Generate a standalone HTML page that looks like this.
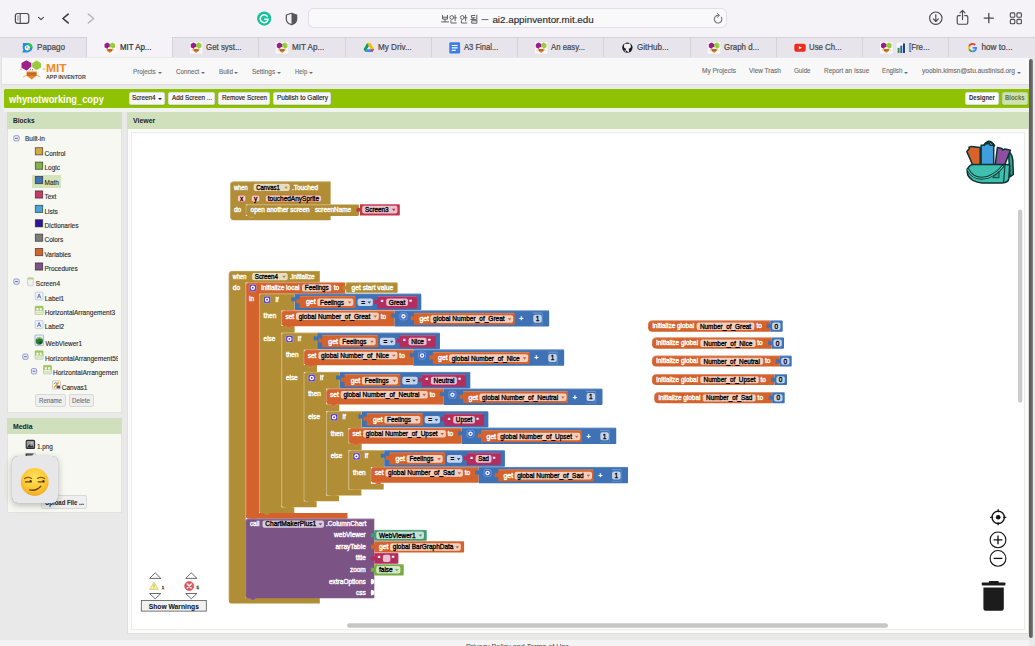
<!DOCTYPE html>
<html><head><meta charset="utf-8"><title>MIT App Inventor</title>
<style>
*{box-sizing:border-box;margin:0;padding:0}
html,body{width:1035px;height:646px;overflow:hidden;background:#e9e9e9;font-family:"Liberation Sans",sans-serif;}
#root{position:relative;width:1035px;height:646px;overflow:hidden}
.a{position:absolute}
.t{position:absolute;white-space:nowrap;line-height:1;font-family:"Liberation Sans",sans-serif}
svg{position:absolute;left:0;top:0;overflow:visible}
svg text{font-family:"Liberation Sans",sans-serif}
</style></head><body><div id="root">
<div class="a toolbar" style="left:0.00px;top:0.00px;width:1035.00px;height:37.30px;background:#f5f3f7;"></div>
<div class="a " style="left:308.30px;top:8.40px;width:418.70px;height:19.90px;background:#f9f8fb;border:1px solid #e1dee5;border-radius:5.5px;"></div>
<div class="a tabbar" style="left:0.00px;top:37.30px;width:1035.00px;height:20.50px;background:#e7e5eb;border-top:1px solid #d4d1d9;border-bottom:1px solid #cfccd4;"></div>
<div class="a " style="left:86.25px;top:37.30px;width:86.25px;height:20.50px;background:#f5f3f7;border-left:1px solid #d4d1d9;border-right:1px solid #d4d1d9;"></div>
<div class="a " style="left:172.00px;top:38.30px;width:1.00px;height:18.70px;background:#d5d2da;"></div>
<div class="a " style="left:258.25px;top:38.30px;width:1.00px;height:18.70px;background:#d5d2da;"></div>
<div class="a " style="left:344.50px;top:38.30px;width:1.00px;height:18.70px;background:#d5d2da;"></div>
<div class="a " style="left:430.75px;top:38.30px;width:1.00px;height:18.70px;background:#d5d2da;"></div>
<div class="a " style="left:517.00px;top:38.30px;width:1.00px;height:18.70px;background:#d5d2da;"></div>
<div class="a " style="left:603.25px;top:38.30px;width:1.00px;height:18.70px;background:#d5d2da;"></div>
<div class="a " style="left:689.50px;top:38.30px;width:1.00px;height:18.70px;background:#d5d2da;"></div>
<div class="a " style="left:775.75px;top:38.30px;width:1.00px;height:18.70px;background:#d5d2da;"></div>
<div class="a " style="left:862.00px;top:38.30px;width:1.00px;height:18.70px;background:#d5d2da;"></div>
<div class="a " style="left:948.25px;top:38.30px;width:1.00px;height:18.70px;background:#d5d2da;"></div>
<span class="t" style="left:37.00px;top:43.75px;font-size:8.2px;color:#444447;transform:scaleX(0.9904);transform-origin:0 0;-webkit-text-stroke:0.2px currentColor;">Papago</span>
<span class="t" style="left:119.50px;top:43.75px;font-size:8.2px;color:#2f2f31;transform:scaleX(0.9645);transform-origin:0 0;-webkit-text-stroke:0.2px currentColor;">MIT Ap...</span>
<span class="t" style="left:205.50px;top:43.75px;font-size:8.2px;color:#444447;transform:scaleX(0.9619);transform-origin:0 0;-webkit-text-stroke:0.2px currentColor;">Get syst...</span>
<span class="t" style="left:292.00px;top:43.75px;font-size:8.2px;color:#444447;transform:scaleX(0.9859);transform-origin:0 0;-webkit-text-stroke:0.2px currentColor;">MIT Ap...</span>
<span class="t" style="left:378.20px;top:43.75px;font-size:8.2px;color:#444447;transform:scaleX(0.9938);transform-origin:0 0;-webkit-text-stroke:0.2px currentColor;">My Driv...</span>
<span class="t" style="left:464.40px;top:43.75px;font-size:8.2px;color:#444447;transform:scaleX(0.9318);transform-origin:0 0;-webkit-text-stroke:0.2px currentColor;">A3 Final...</span>
<span class="t" style="left:551.00px;top:43.75px;font-size:8.2px;color:#444447;transform:scaleX(0.9483);transform-origin:0 0;-webkit-text-stroke:0.2px currentColor;">An easy...</span>
<span class="t" style="left:637.00px;top:43.75px;font-size:8.2px;color:#444447;transform:scaleX(0.9828);transform-origin:0 0;-webkit-text-stroke:0.2px currentColor;">GitHub...</span>
<span class="t" style="left:723.60px;top:43.75px;font-size:8.2px;color:#444447;transform:scaleX(0.9653);transform-origin:0 0;-webkit-text-stroke:0.2px currentColor;">Graph d...</span>
<span class="t" style="left:809.40px;top:43.75px;font-size:8.2px;color:#444447;transform:scaleX(0.9538);transform-origin:0 0;-webkit-text-stroke:0.2px currentColor;">Use Ch...</span>
<span class="t" style="left:909.40px;top:43.75px;font-size:8.2px;color:#444447;transform:scaleX(0.9620);transform-origin:0 0;-webkit-text-stroke:0.2px currentColor;">[Fre...</span>
<span class="t" style="left:981.50px;top:43.75px;font-size:8.2px;color:#444447;-webkit-text-stroke:0.2px currentColor;">how to...</span>
<span class="t" style="left:492.40px;top:14.54px;font-size:9.8px;color:#2b2b2d;-webkit-text-stroke:0.15px currentColor;">ai2.appinventor.mit.edu</span>
<svg width="1035" height="60" viewBox="0 0 1035 60"><rect x="15.4" y="13.5" width="13.4" height="9.8" rx="2.3" fill="none" stroke="#4a4a4d" stroke-width="1.2"/><path d="M20.2,13.5V23.3" stroke="#4a4a4d" stroke-width="1.1"/><path d="M17,16.2h1.8M17,18h1.8M17,19.8h1.8" stroke="#4a4a4d" stroke-width="0.6"/><path d="M38.6,17.3L41,19.7L43.4,17.3" fill="none" stroke="#4a4a4d" stroke-width="1.2" stroke-linecap="round" stroke-linejoin="round"/><path d="M68.2,14.1L62.9,18.5L68.2,22.9" fill="none" stroke="#3a3a3c" stroke-width="1.6" stroke-linecap="round" stroke-linejoin="round"/><path d="M88.4,14.1L93.7,18.5L88.4,22.9" fill="none" stroke="#b9b6bd" stroke-width="1.5" stroke-linecap="round" stroke-linejoin="round"/><circle cx="264.2" cy="18.6" r="7.1" fill="#15c39a"/><path d="M267.2,16.3A3.9,3.9 0 1 0 268,19.3H264.6" fill="none" stroke="#fff" stroke-width="1.5" stroke-linecap="round"/><path d="M291.5,13.2L296.7,15V19.2C296.7,22 294.2,23.9 291.5,24.7C288.8,23.9 286.3,22 286.3,19.2V15Z" fill="#f4f1f6" stroke="#56565a" stroke-width="1.2" stroke-linejoin="round"/><path d="M291.5,13.2L296.7,15V19.2C296.7,22 294.2,23.9 291.5,24.7Z" fill="#56565a"/><g transform="translate(441.3,15.2)" fill="none" stroke="#5a5a5e" stroke-width="0.95" stroke-linecap="round" stroke-linejoin="round"><path d="M1.2,0.2V3.9H6.2V0.2M1.2,2H6.2M3.7,4.2V6.4M0.2,6.7H7.3"/></g><g transform="translate(449.5,15.2)" fill="none" stroke="#5a5a5e" stroke-width="0.95" stroke-linecap="round" stroke-linejoin="round"><circle cx="2.3" cy="2.3" r="1.9"/><path d="M5.6,0V5.6M5.6,2.6H7M1.4,5.4V7.8H6.8"/></g><g transform="translate(460,15.2)" fill="none" stroke="#5a5a5e" stroke-width="0.95" stroke-linecap="round" stroke-linejoin="round"><circle cx="2.3" cy="2.3" r="1.9"/><path d="M5.6,0V5.6M5.6,2.6H7M1.4,5.4V7.8H6.8"/></g><g transform="translate(470.6,15.2)" fill="none" stroke="#5a5a5e" stroke-width="0.95" stroke-linecap="round" stroke-linejoin="round"><path d="M4.2,0.3H0.8V2.6H4.4M2.4,2.8V4M0.2,4.3H4.9M6.2,0V5.1"/><rect x="1.5" y="5.6" width="4.8" height="2.4"/></g><path d="M481.6,19.6H488.4" stroke="#5a5a5e" stroke-width="0.9"/><path d="M721.3,17.2A3.8,3.8 0 1 1 718.4,15.4" fill="none" stroke="#77757b" stroke-width="1.1" stroke-linecap="round"/><path d="M717.2,13.4L719.6,15.4L717.4,17.4" fill="none" stroke="#77757b" stroke-width="1" stroke-linecap="round" stroke-linejoin="round"/><circle cx="935.8" cy="18.2" r="6.2" fill="none" stroke="#4a4a4d" stroke-width="1.15"/><path d="M935.8,14.6V21.4M933.2,18.9L935.8,21.5L938.4,18.9" fill="none" stroke="#4a4a4d" stroke-width="1.15" stroke-linecap="round" stroke-linejoin="round"/><path d="M960.3,15.6H958.6Q957.2,15.6 957.2,17V22.8Q957.2,24.2 958.6,24.2H966.4Q967.8,24.2 967.8,22.8V17Q967.8,15.6 966.4,15.6H964.7" fill="none" stroke="#4a4a4d" stroke-width="1.15" stroke-linecap="round"/><path d="M962.5,10.4V19.6M960,12.8L962.5,10.3L965,12.8" fill="none" stroke="#4a4a4d" stroke-width="1.15" stroke-linecap="round" stroke-linejoin="round"/><path d="M984.2,18.1H993.4M988.8,13.5V22.7" stroke="#4a4a4d" stroke-width="1.3" stroke-linecap="round"/><rect x="1010.3" y="12.9" width="4.5" height="4.3" rx="1" fill="none" stroke="#4a4a4d" stroke-width="1.1"/><rect x="1010.3" y="19.4" width="4.5" height="4.3" rx="1" fill="none" stroke="#4a4a4d" stroke-width="1.1"/><rect x="1016.9" y="12.9" width="4.5" height="4.3" rx="1" fill="none" stroke="#4a4a4d" stroke-width="1.1"/><rect x="1016.9" y="19.4" width="4.5" height="4.3" rx="1" fill="none" stroke="#4a4a4d" stroke-width="1.1"/><g transform="translate(22.3,42.8)"><path d="M0.6,0.6Q0.2,0.2 1,0.2H5.4C8.6,0.2 10.2,2.4 10.2,4.8C10.2,7.8 7.6,9.6 4.6,9.6H0.2Q-0.2,9.6 0.1,9.1L1.1,7.2Q0.3,5.8 0.4,4.2Z" fill="#1b8fe0"/><path d="M4.6,0.2C8.4,-0.2 10.4,2.4 10.2,5L6.4,4.6Z" fill="#21c75a"/><circle cx="5" cy="5" r="2.6" fill="#f4fbff"/><path d="M5.2,5L7.8,5.6L5.6,7Z" fill="#f2c230"/><circle cx="4.6" cy="4.3" r="0.6" fill="#1c2a55"/></g><g transform="translate(104,42.6) scale(1.0)"><rect x="-0.5" y="-0.5" width="12.5" height="11.5" fill="#fbfafc" opacity="0.9"/><path d="M3.2,0L5.9,1.5V4.6L3.2,6.1L0.5,4.6V1.5Z" fill="#9c1b8c"/><path d="M8.4,0L11.1,1.5V4.6L8.4,6.1L5.7,4.6V1.5Z" fill="#9acb3c"/><path d="M3.3,6.3H8.3V8.4L5.8,10.4L3.3,8.4Z" fill="#e8862a"/><path d="M3.3,7.1H8.3V7.9H3.3Z" fill="#7a3d12"/><path d="M4.2,4.6H7.4V6.3H4.2Z" fill="#f4f0ec"/><path d="M1.4,7.6L3.3,6.9M10.2,7.6L8.3,6.9" stroke="#e8862a" stroke-width="0.6"/></g><g transform="translate(190.3,42.6) scale(1.0)"><rect x="-0.5" y="-0.5" width="12.5" height="11.5" fill="#fbfafc" opacity="0.9"/><path d="M3.2,0L5.9,1.5V4.6L3.2,6.1L0.5,4.6V1.5Z" fill="#9c1b8c"/><path d="M8.4,0L11.1,1.5V4.6L8.4,6.1L5.7,4.6V1.5Z" fill="#9acb3c"/><path d="M3.3,6.3H8.3V8.4L5.8,10.4L3.3,8.4Z" fill="#e8862a"/><path d="M3.3,7.1H8.3V7.9H3.3Z" fill="#7a3d12"/><path d="M4.2,4.6H7.4V6.3H4.2Z" fill="#f4f0ec"/><path d="M1.4,7.6L3.3,6.9M10.2,7.6L8.3,6.9" stroke="#e8862a" stroke-width="0.6"/></g><g transform="translate(276.3,42.6) scale(1.0)"><rect x="-0.5" y="-0.5" width="12.5" height="11.5" fill="#fbfafc" opacity="0.9"/><path d="M3.2,0L5.9,1.5V4.6L3.2,6.1L0.5,4.6V1.5Z" fill="#9c1b8c"/><path d="M8.4,0L11.1,1.5V4.6L8.4,6.1L5.7,4.6V1.5Z" fill="#9acb3c"/><path d="M3.3,6.3H8.3V8.4L5.8,10.4L3.3,8.4Z" fill="#e8862a"/><path d="M3.3,7.1H8.3V7.9H3.3Z" fill="#7a3d12"/><path d="M4.2,4.6H7.4V6.3H4.2Z" fill="#f4f0ec"/><path d="M1.4,7.6L3.3,6.9M10.2,7.6L8.3,6.9" stroke="#e8862a" stroke-width="0.6"/></g><g transform="translate(535.3,42.6) scale(1.0)"><rect x="-0.5" y="-0.5" width="12.5" height="11.5" fill="#fbfafc" opacity="0.9"/><path d="M3.2,0L5.9,1.5V4.6L3.2,6.1L0.5,4.6V1.5Z" fill="#9c1b8c"/><path d="M8.4,0L11.1,1.5V4.6L8.4,6.1L5.7,4.6V1.5Z" fill="#9acb3c"/><path d="M3.3,6.3H8.3V8.4L5.8,10.4L3.3,8.4Z" fill="#e8862a"/><path d="M3.3,7.1H8.3V7.9H3.3Z" fill="#7a3d12"/><path d="M4.2,4.6H7.4V6.3H4.2Z" fill="#f4f0ec"/><path d="M1.4,7.6L3.3,6.9M10.2,7.6L8.3,6.9" stroke="#e8862a" stroke-width="0.6"/></g><g transform="translate(708.3,42.6) scale(1.0)"><rect x="-0.5" y="-0.5" width="12.5" height="11.5" fill="#fbfafc" opacity="0.9"/><path d="M3.2,0L5.9,1.5V4.6L3.2,6.1L0.5,4.6V1.5Z" fill="#9c1b8c"/><path d="M8.4,0L11.1,1.5V4.6L8.4,6.1L5.7,4.6V1.5Z" fill="#9acb3c"/><path d="M3.3,6.3H8.3V8.4L5.8,10.4L3.3,8.4Z" fill="#e8862a"/><path d="M3.3,7.1H8.3V7.9H3.3Z" fill="#7a3d12"/><path d="M4.2,4.6H7.4V6.3H4.2Z" fill="#f4f0ec"/><path d="M1.4,7.6L3.3,6.9M10.2,7.6L8.3,6.9" stroke="#e8862a" stroke-width="0.6"/></g><g transform="translate(880.5,42.6) scale(1.0)"><rect x="-0.5" y="-0.5" width="12.5" height="11.5" fill="#fbfafc" opacity="0.9"/><path d="M3.2,0L5.9,1.5V4.6L3.2,6.1L0.5,4.6V1.5Z" fill="#9c1b8c"/><path d="M8.4,0L11.1,1.5V4.6L8.4,6.1L5.7,4.6V1.5Z" fill="#9acb3c"/><path d="M3.3,6.3H8.3V8.4L5.8,10.4L3.3,8.4Z" fill="#e8862a"/><path d="M3.3,7.1H8.3V7.9H3.3Z" fill="#7a3d12"/><path d="M4.2,4.6H7.4V6.3H4.2Z" fill="#f4f0ec"/><path d="M1.4,7.6L3.3,6.9M10.2,7.6L8.3,6.9" stroke="#e8862a" stroke-width="0.6"/></g><g transform="translate(363.6,43)"><path d="M3.6,0H6.9L10.5,6.2H7.2Z" fill="#fbbc04"/><path d="M3.6,0L0,6.2L1.7,9.1L5.25,2.9Z" fill="#0f9d58"/><path d="M1.7,9.1H8.8L10.5,6.2H3.4Z" fill="#4285f4"/><path d="M7.2,6.2H10.5L8.8,9.1Z" fill="#ea4335"/></g><g transform="translate(449.3,42.2)"><rect x="0" y="0" width="10.8" height="11.4" rx="1.4" fill="#3b7de9"/><path d="M2.4,3.3H8.4M2.4,5.7H8.4M2.4,8.1H6.4" stroke="#fff" stroke-width="1.15"/></g><g transform="translate(627.4,47.6)"><circle r="5.2" fill="#1b1b1d"/><path d="M-1.6,5V2.9C-3.4,3.3 -3.8,2 -4.3,1.6M1.6,5V2.6C1.6,1.8 1.4,1.5 1.1,1.2C2.8,1 3.5,0.1 3.5,-1.3C3.5,-2 3.3,-2.5 2.9,-3C3,-3.4 3,-3.9 2.8,-4.4C2.2,-4.4 1.6,-4 1.2,-3.7C0.4,-3.9 -0.4,-3.9 -1.2,-3.7C-1.6,-4 -2.2,-4.4 -2.8,-4.4C-3,-3.9 -3,-3.4 -2.9,-3C-3.3,-2.5 -3.5,-2 -3.5,-1.3C-3.5,0.1 -2.8,1 -1.1,1.2C-1.4,1.5 -1.6,1.8 -1.6,2.6" fill="#f3f0f5" stroke="none"/></g><g transform="translate(794.3,43.8)"><rect width="11.4" height="8" rx="2" fill="#f0281e"/><path d="M4.5,2.2L7.6,4L4.5,5.8Z" fill="#fff"/></g><g transform="translate(896.8,42.8)"><rect width="9" height="10.2" fill="#f8f8f8"/><rect x="0.8" y="5" width="2" height="5.2" fill="#3a8f3a"/><rect x="3.5" y="2.8" width="2" height="7.4" fill="#2a59b8"/><rect x="6.2" y="0.6" width="2" height="9.6" fill="#1c3f94"/></g><g transform="translate(972.5,47.7)"><path d="M4.5,-0.8H0.1V1H2.6A2.8,2.8 0 0 1 0,2.8V4.6A4.6,4.6 0 0 0 4.5,-0.8Z" fill="#4285f4"/><path d="M0,4.6V2.8A2.8,2.8 0 0 1 -2.6,1L-4.1,2.1A4.6,4.6 0 0 0 0,4.6Z" fill="#34a853"/><path d="M-2.6,1A2.8,2.8 0 0 1 -2.6,-1L-4.1,-2.1A4.6,4.6 0 0 0 -4.1,2.1Z" fill="#fbbc05"/><path d="M-2.6,-1A2.8,2.8 0 0 1 2,-2L3.3,-3.3A4.6,4.6 0 0 0 -4.1,-2.1Z" fill="#ea4335"/></g></svg>
<div class="a " style="left:0.00px;top:57.30px;width:1035.00px;height:588.70px;background:#e9e9e9;"></div>
<div class="a " style="left:1.00px;top:57.80px;width:1029.00px;height:27.10px;background:#f8f8f8;border-bottom:1px solid #dedede;border-left:1px solid #e2e2e2;"></div>
<span class="t" style="left:133.30px;top:68.71px;font-size:6.9px;color:#6e6e6e;transform:scaleX(0.9107);transform-origin:0 0;-webkit-text-stroke:0.12px currentColor;">Projects</span>
<div class="a" style="left:158.00px;top:72.00px;border-left:2.1px solid transparent;border-right:2.1px solid transparent;border-top:2.4px solid #6e6e6e"></div>
<span class="t" style="left:175.80px;top:68.71px;font-size:6.9px;color:#6e6e6e;transform:scaleX(0.9105);transform-origin:0 0;-webkit-text-stroke:0.12px currentColor;">Connect</span>
<div class="a" style="left:201.20px;top:72.00px;border-left:2.1px solid transparent;border-right:2.1px solid transparent;border-top:2.4px solid #6e6e6e"></div>
<span class="t" style="left:218.50px;top:68.71px;font-size:6.9px;color:#6e6e6e;transform:scaleX(0.9059);transform-origin:0 0;-webkit-text-stroke:0.12px currentColor;">Build</span>
<div class="a" style="left:234.40px;top:72.00px;border-left:2.1px solid transparent;border-right:2.1px solid transparent;border-top:2.4px solid #6e6e6e"></div>
<span class="t" style="left:252.00px;top:68.71px;font-size:6.9px;color:#6e6e6e;transform:scaleX(0.9265);transform-origin:0 0;-webkit-text-stroke:0.12px currentColor;">Settings</span>
<div class="a" style="left:277.10px;top:72.00px;border-left:2.1px solid transparent;border-right:2.1px solid transparent;border-top:2.4px solid #6e6e6e"></div>
<span class="t" style="left:294.60px;top:68.71px;font-size:6.9px;color:#6e6e6e;transform:scaleX(0.8597);transform-origin:0 0;-webkit-text-stroke:0.12px currentColor;">Help</span>
<div class="a" style="left:308.80px;top:72.00px;border-left:2.1px solid transparent;border-right:2.1px solid transparent;border-top:2.4px solid #6e6e6e"></div>
<span class="t" style="left:701.70px;top:68.21px;font-size:6.9px;color:#6e6e6e;transform:scaleX(0.9434);transform-origin:0 0;-webkit-text-stroke:0.12px currentColor;">My Projects</span>
<span class="t" style="left:748.70px;top:68.21px;font-size:6.9px;color:#6e6e6e;transform:scaleX(0.9410);transform-origin:0 0;-webkit-text-stroke:0.12px currentColor;">View Trash</span>
<span class="t" style="left:793.70px;top:68.21px;font-size:6.9px;color:#6e6e6e;transform:scaleX(0.9015);transform-origin:0 0;-webkit-text-stroke:0.12px currentColor;">Guide</span>
<span class="t" style="left:823.70px;top:68.21px;font-size:6.9px;color:#6e6e6e;transform:scaleX(0.9300);transform-origin:0 0;-webkit-text-stroke:0.12px currentColor;">Report an Issue</span>
<span class="t" style="left:881.70px;top:68.21px;font-size:6.9px;color:#6e6e6e;transform:scaleX(0.9014);transform-origin:0 0;-webkit-text-stroke:0.12px currentColor;">English</span>
<div class="a" style="left:904.10px;top:71.50px;border-left:2.1px solid transparent;border-right:2.1px solid transparent;border-top:2.4px solid #6e6e6e"></div>
<span class="t" style="left:921.70px;top:68.21px;font-size:6.9px;color:#6e6e6e;transform:scaleX(0.9547);transform-origin:0 0;-webkit-text-stroke:0.12px currentColor;">yoobin.kimsn@stu.austinisd.org</span>
<div class="a" style="left:1016.80px;top:71.50px;border-left:2.1px solid transparent;border-right:2.1px solid transparent;border-top:2.4px solid #6e6e6e"></div>
<span class="t" style="left:45.70px;top:62.83px;font-size:10.8px;color:#f08a24;font-weight:bold;transform:scaleX(1.1025);transform-origin:0 0;">MIT</span>
<span class="t" style="left:45.50px;top:74.06px;font-size:6.2px;color:#4a4a4a;font-weight:bold;transform:scaleX(0.8621);transform-origin:0 0;">APP INVENTOR</span>
<svg width="120" height="90" viewBox="0 0 120 90"><g transform="translate(20,60.2)"><path d="M6.4,0.1L11.3,2.9V7.6L6.4,10.3L1.5,7.6V2.9Z" fill="#a01f8a"/><path d="M16.6,0.4L21.1,3V7.3L16.6,9.8L12.2,7.3V3Z" fill="#9acb3f"/><path d="M0,9.2L2.4,8.6M23,8.6L25.4,9.2M3.2,16.8L6.8,15M16.6,15L20.2,16.8" stroke="#f09a3a" stroke-width="0.8"/><circle cx="11.4" cy="9.9" r="2.9" fill="#fbf7f3"/><circle cx="10.3" cy="9.5" r="0.5" fill="#3a2a2a"/><circle cx="12.6" cy="9.5" r="0.5" fill="#3a2a2a"/><path d="M6.6,11.4H16.7V15.5L11.6,19.3L6.6,15.5Z" fill="#f0892a"/><path d="M6.9,12.5H16.4V13.5H6.9ZM6.9,14.3H16.4V15.2H6.9Z" fill="#a9561c"/></g></svg>
<div class="a greenbar" style="left:4.40px;top:89.20px;width:1026.20px;height:18.70px;background:#8fc202;border-radius:1.5px;"></div>
<span class="t" style="left:8.80px;top:93.83px;font-size:11.2px;color:#fff;font-weight:bold;transform:scaleX(0.8288);transform-origin:0 0;">whynotworking_copy</span>
<div class="a " style="left:128.80px;top:92.00px;width:36.40px;height:12.80px;background:#f7f7f7;border:1px solid #dcdcdc;border-radius:2px;box-shadow:0 0.5px 0.5px rgba(0,0,0,.12);"></div>
<span class="t" style="left:132.25px;top:95.16px;font-size:6.6px;color:#222;transform:scaleX(0.9559);transform-origin:0 0;-webkit-text-stroke:0.15px currentColor;">Screen4</span>
<div class="a" style="left:157.75px;top:97.60px;border-left:2px solid transparent;border-right:2px solid transparent;border-top:2.3px solid #222"></div>
<div class="a " style="left:168.20px;top:92.00px;width:46.80px;height:12.80px;background:#f7f7f7;border:1px solid #dcdcdc;border-radius:2px;box-shadow:0 0.5px 0.5px rgba(0,0,0,.12);"></div>
<span class="t" style="left:171.60px;top:95.16px;font-size:6.6px;color:#222;transform:scaleX(0.9564);transform-origin:0 0;-webkit-text-stroke:0.15px currentColor;">Add Screen ...</span>
<div class="a " style="left:218.00px;top:92.00px;width:52.00px;height:12.80px;background:#f7f7f7;border:1px solid #dcdcdc;border-radius:2px;box-shadow:0 0.5px 0.5px rgba(0,0,0,.12);"></div>
<span class="t" style="left:221.50px;top:95.16px;font-size:6.6px;color:#222;transform:scaleX(0.9509);transform-origin:0 0;-webkit-text-stroke:0.15px currentColor;">Remove Screen</span>
<div class="a " style="left:273.30px;top:92.00px;width:57.70px;height:12.80px;background:#f7f7f7;border:1px solid #dcdcdc;border-radius:2px;box-shadow:0 0.5px 0.5px rgba(0,0,0,.12);"></div>
<span class="t" style="left:276.65px;top:95.16px;font-size:6.6px;color:#222;transform:scaleX(0.9860);transform-origin:0 0;-webkit-text-stroke:0.15px currentColor;">Publish to Gallery</span>
<div class="a " style="left:965.40px;top:92.00px;width:33.40px;height:12.80px;background:#fbfbfb;border:1px solid #dcdcdc;border-radius:2px;box-shadow:0 0.5px 0.5px rgba(0,0,0,.12);"></div>
<span class="t" style="left:969.20px;top:95.16px;font-size:6.6px;color:#2e2e2e;font-weight:bold;transform:scaleX(0.9135);transform-origin:0 0;">Designer</span>
<div class="a " style="left:1001.50px;top:92.00px;width:26.50px;height:12.80px;background:#cfe1b0;border:1px solid #bfd49a;border-radius:2px;box-shadow:0 0.5px 0.5px rgba(0,0,0,.12);"></div>
<span class="t" style="left:1004.95px;top:95.16px;font-size:6.6px;color:#5d7338;font-weight:bold;transform:scaleX(0.9056);transform-origin:0 0;">Blocks</span>
<div class="a " style="left:4.40px;top:107.90px;width:1024.60px;height:4.10px;background:#f1f3ed;"></div>
<div class="a " style="left:1028.80px;top:58.80px;width:4.60px;height:579.60px;background:linear-gradient(90deg,#5a5a5a 0%,#666 60%,#8a8a8a 100%);border-radius:2px;"></div>
<div class="a " style="left:7.00px;top:112.00px;width:115.00px;height:301.40px;background:#f7f8f2;border:1px solid #e1e3dc;"></div>
<div class="a " style="left:7.00px;top:112.00px;width:115.00px;height:16.80px;background:#d1e0bc;"></div>
<span class="t" style="left:12.50px;top:117.05px;font-size:7px;color:#222;font-weight:bold;transform:scaleX(0.9409);transform-origin:0 0;">Blocks</span>
<div class="a " style="left:7.00px;top:418.00px;width:115.00px;height:94.80px;background:#f7f8f2;border:1px solid #e1e3dc;"></div>
<div class="a " style="left:7.00px;top:418.00px;width:115.00px;height:15.80px;background:#d1e0bc;"></div>
<span class="t" style="left:12.60px;top:422.65px;font-size:7px;color:#222;font-weight:bold;transform:scaleX(0.9880);transform-origin:0 0;">Media</span>
<div class="a " style="left:127.00px;top:112.00px;width:901.60px;height:521.60px;background:#fbfcf9;border:1px solid #dfe1da;"></div>
<div class="a " style="left:127.00px;top:112.00px;width:901.60px;height:16.80px;background:#d1e0bc;"></div>
<span class="t" style="left:132.60px;top:117.05px;font-size:7px;color:#222;font-weight:bold;transform:scaleX(0.9892);transform-origin:0 0;">Viewer</span>
<div class="a " style="left:130.80px;top:132.40px;width:893.80px;height:498.00px;background:#ffffff;border:1px solid #ececec;"></div>
<span class="t" style="left:25.00px;top:135.81px;font-size:6.5px;color:#2a2a2a;-webkit-text-stroke:0.12px currentColor;">Built-in</span>
<div class="a " style="left:31.80px;top:175.20px;width:29.40px;height:13.00px;background:#d4e3b8;"></div>
<span class="t" style="left:44.50px;top:150.91px;font-size:6.5px;color:#2a2a2a;-webkit-text-stroke:0.12px currentColor;">Control</span>
<span class="t" style="left:44.50px;top:165.31px;font-size:6.5px;color:#2a2a2a;-webkit-text-stroke:0.12px currentColor;">Logic</span>
<span class="t" style="left:44.50px;top:179.71px;font-size:6.5px;color:#2a2a2a;-webkit-text-stroke:0.12px currentColor;">Math</span>
<span class="t" style="left:44.50px;top:194.11px;font-size:6.5px;color:#2a2a2a;-webkit-text-stroke:0.12px currentColor;">Text</span>
<span class="t" style="left:44.50px;top:208.51px;font-size:6.5px;color:#2a2a2a;-webkit-text-stroke:0.12px currentColor;">Lists</span>
<span class="t" style="left:44.50px;top:222.91px;font-size:6.5px;color:#2a2a2a;-webkit-text-stroke:0.12px currentColor;">Dictionaries</span>
<span class="t" style="left:44.50px;top:237.31px;font-size:6.5px;color:#2a2a2a;-webkit-text-stroke:0.12px currentColor;">Colors</span>
<span class="t" style="left:44.50px;top:251.71px;font-size:6.5px;color:#2a2a2a;-webkit-text-stroke:0.12px currentColor;">Variables</span>
<span class="t" style="left:44.50px;top:266.11px;font-size:6.5px;color:#2a2a2a;-webkit-text-stroke:0.12px currentColor;">Procedures</span>
<span class="t" style="left:35.80px;top:280.91px;font-size:6.5px;color:#2a2a2a;-webkit-text-stroke:0.12px currentColor;">Screen4</span>
<span class="t" style="left:44.70px;top:295.51px;font-size:6.5px;color:#2a2a2a;-webkit-text-stroke:0.12px currentColor;">Label1</span>
<span class="t" style="left:44.70px;top:309.71px;font-size:6.5px;color:#2a2a2a;-webkit-text-stroke:0.12px currentColor;">HorizontalArrangement3</span>
<span class="t" style="left:44.70px;top:324.01px;font-size:6.5px;color:#2a2a2a;-webkit-text-stroke:0.12px currentColor;">Label2</span>
<span class="t" style="left:45.50px;top:341.41px;font-size:6.5px;color:#2a2a2a;-webkit-text-stroke:0.12px currentColor;">WebViewer1</span>
<div class="a" style="left:44.7px;top:352px;width:73.4px;height:12px;overflow:hidden">
<span class="t" style="left:0.00px;top:3.71px;font-size:6.5px;color:#2a2a2a;transform:scaleX(1.0058);transform-origin:0 0;-webkit-text-stroke:0.12px currentColor;">HorizontalArrangement59</span>
</div>
<div class="a" style="left:53.1px;top:366.6px;width:65.4px;height:12px;overflow:hidden">
<span class="t" style="left:0.00px;top:3.71px;font-size:6.5px;color:#2a2a2a;transform:scaleX(1.0058);transform-origin:0 0;-webkit-text-stroke:0.12px currentColor;">HorizontalArrangement60</span>
</div>
<span class="t" style="left:61.80px;top:384.51px;font-size:6.5px;color:#2a2a2a;-webkit-text-stroke:0.12px currentColor;">Canvas1</span>
<div class="a " style="left:34.50px;top:393.70px;width:31.10px;height:13.70px;background:#efefef;border:1px solid #d9d9d9;border-radius:2px;"></div>
<span class="t" style="left:38.55px;top:398.01px;font-size:6.6px;color:#707070;transform:scaleX(0.9219);transform-origin:0 0;-webkit-text-stroke:0.12px currentColor;">Rename</span>
<div class="a " style="left:68.50px;top:393.70px;width:25.50px;height:13.70px;background:#efefef;border:1px solid #d9d9d9;border-radius:2px;"></div>
<span class="t" style="left:72.25px;top:398.01px;font-size:6.6px;color:#707070;transform:scaleX(0.9435);transform-origin:0 0;-webkit-text-stroke:0.12px currentColor;">Delete</span>
<span class="t" style="left:36.60px;top:443.71px;font-size:6.5px;color:#2a2a2a;transform:scaleX(0.9713);transform-origin:0 0;-webkit-text-stroke:0.12px currentColor;">1.png</span>
<div class="a " style="left:40.90px;top:495.40px;width:46.40px;height:13.60px;background:#efefef;border:1px solid #d9d9d9;border-radius:2px;"></div>
<span class="t" style="left:44.60px;top:499.66px;font-size:6.6px;color:#333;font-weight:bold;transform:scaleX(0.9090);transform-origin:0 0;-webkit-text-stroke:0.12px currentColor;">Upload File ...</span>
<svg width="130" height="646" viewBox="0 0 130 646"><rect x="13.9" y="135.70000000000002" width="5.2" height="5.2" rx="1.2" fill="#eef0fa" stroke="#6a72b8" stroke-width="0.7"/><path d="M15.1,138.3H17.9" stroke="#39408a" stroke-width="0.8"/><rect x="35.3" y="147.70000000000002" width="7.4" height="7.2" fill="#d1aa45" stroke="#1a1a1a" stroke-opacity="0.7" stroke-width="0.8"/><rect x="35.3" y="162.10000000000002" width="7.4" height="7.2" fill="#82b34a" stroke="#1a1a1a" stroke-opacity="0.7" stroke-width="0.8"/><rect x="35.3" y="176.50000000000003" width="7.4" height="7.2" fill="#3f71b5" stroke="#1a1a1a" stroke-opacity="0.7" stroke-width="0.8"/><rect x="35.3" y="190.90000000000003" width="7.4" height="7.2" fill="#c73a6c" stroke="#1a1a1a" stroke-opacity="0.7" stroke-width="0.8"/><rect x="35.3" y="205.3" width="7.4" height="7.2" fill="#49a6d4" stroke="#1a1a1a" stroke-opacity="0.7" stroke-width="0.8"/><rect x="35.3" y="219.70000000000002" width="7.4" height="7.2" fill="#2d1799" stroke="#1a1a1a" stroke-opacity="0.7" stroke-width="0.8"/><rect x="35.3" y="234.10000000000002" width="7.4" height="7.2" fill="#7d7d7d" stroke="#1a1a1a" stroke-opacity="0.7" stroke-width="0.8"/><rect x="35.3" y="248.5" width="7.4" height="7.2" fill="#d4632e" stroke="#1a1a1a" stroke-opacity="0.7" stroke-width="0.8"/><rect x="35.3" y="262.90000000000003" width="7.4" height="7.2" fill="#7c5385" stroke="#1a1a1a" stroke-opacity="0.7" stroke-width="0.8"/><rect x="13.9" y="279.0" width="5.2" height="5.2" rx="1.2" fill="#eef0fa" stroke="#6a72b8" stroke-width="0.7"/><path d="M15.1,281.6H17.9" stroke="#39408a" stroke-width="0.8"/><rect x="27.6" y="277.8" width="5.8" height="8" rx="0.8" fill="#f1f1ee" stroke="#b9b9b4" stroke-width="0.6"/><rect x="27.6" y="277.8" width="5.8" height="1.6" fill="#b9cf8e"/><rect x="35.2" y="292.1" width="7.8" height="7.8" rx="0.8" fill="#eef2fa" stroke="#a9b6cf" stroke-width="0.6"/><path d="M37.400000000000006,298.3L39.1,293.90000000000003L40.800000000000004,298.3M38.0,296.8H40.2" fill="none" stroke="#4d6db3" stroke-width="0.8"/><rect x="35.1" y="306.2" width="8" height="8.4" rx="0.8" fill="#e9efdc" stroke="#a5bf78" stroke-width="0.6"/><rect x="35.1" y="306.2" width="8" height="4.6" fill="#9cc45a"/><rect x="36.4" y="308.0" width="2.1" height="2.4" fill="#f4f8ec"/><rect x="39.7" y="308.0" width="2.1" height="2.4" fill="#f4f8ec"/><path d="M35.9,312.59999999999997H42.300000000000004" stroke="#c9d6b4" stroke-width="0.7"/><rect x="35.2" y="320.6" width="7.8" height="7.8" rx="0.8" fill="#eef2fa" stroke="#a9b6cf" stroke-width="0.6"/><path d="M37.400000000000006,326.8L39.1,322.40000000000003L40.800000000000004,326.8M38.0,325.3H40.2" fill="none" stroke="#4d6db3" stroke-width="0.8"/><rect x="35" y="335" width="8.6" height="10.6" rx="0.8" fill="#e8eef8" stroke="#7d93c0" stroke-width="0.6"/><circle cx="39.3" cy="341" r="3.7" fill="#2d7a2d"/><path d="M36.6,339.4A3.6,3.6 0 0 1 41.6,338.6" stroke="#9fe08f" stroke-width="1.1" fill="none"/><circle cx="40.6" cy="342.6" r="1.4" fill="#14501a"/><rect x="22.799999999999997" y="354.09999999999997" width="5.2" height="5.2" rx="1.2" fill="#eef0fa" stroke="#6a72b8" stroke-width="0.7"/><path d="M24.0,356.7H26.799999999999997" stroke="#39408a" stroke-width="0.8"/><rect x="35.1" y="350.8" width="8" height="8.4" rx="0.8" fill="#e9efdc" stroke="#a5bf78" stroke-width="0.6"/><rect x="35.1" y="350.8" width="8" height="4.6" fill="#9cc45a"/><rect x="36.4" y="352.6" width="2.1" height="2.4" fill="#f4f8ec"/><rect x="39.7" y="352.6" width="2.1" height="2.4" fill="#f4f8ec"/><path d="M35.9,357.2H42.300000000000004" stroke="#c9d6b4" stroke-width="0.7"/><rect x="31.4" y="368.59999999999997" width="5.2" height="5.2" rx="1.2" fill="#eef0fa" stroke="#6a72b8" stroke-width="0.7"/><path d="M32.6,371.2H35.4" stroke="#39408a" stroke-width="0.8"/><rect x="43.5" y="365.4" width="8" height="8.4" rx="0.8" fill="#e9efdc" stroke="#a5bf78" stroke-width="0.6"/><rect x="43.5" y="365.4" width="8" height="4.6" fill="#9cc45a"/><rect x="44.8" y="367.2" width="2.1" height="2.4" fill="#f4f8ec"/><rect x="48.1" y="367.2" width="2.1" height="2.4" fill="#f4f8ec"/><path d="M44.3,371.79999999999995H50.7" stroke="#c9d6b4" stroke-width="0.7"/><rect x="52.6" y="380.8" width="8" height="8.2" rx="0.8" fill="#fbf6e0" stroke="#b8b09a" stroke-width="0.6"/><path d="M54,387.6L58.8,382.2" stroke="#e0a21c" stroke-width="1.3"/><path d="M54.2,383.6Q56,381.6 57,383.6" stroke="#3d63c4" stroke-width="0.8" fill="none"/><rect x="56.6" y="385.6" width="3.4" height="2.8" fill="#4a4a8a"/><rect x="26.2" y="440.4" width="8.4" height="8" rx="1" fill="#9a9a9a" stroke="#2e2e2e" stroke-width="1.1"/><path d="M27,447.6L29.4,444.2L31.2,446.2L32.4,445.2L33.8,447.6Z" fill="#2e2e2e"/><circle cx="31.9" cy="442.8" r="0.8" fill="#e8e8e8"/><rect x="26.2" y="454" width="8.4" height="4" fill="#9a9a9a" stroke="#2e2e2e" stroke-width="1.1"/></svg>
<div class="a" style="left:11.5px;top:456px;width:46.2px;height:46.6px;background:#e7e6e8;border-radius:6px;box-shadow:0 2px 7px rgba(0,0,0,.28),0 0 0.5px rgba(0,0,0,.4)"></div>
<svg width="130" height="646" viewBox="0 0 130 646"><defs><radialGradient id="eg" cx="0.5" cy="0.35" r="0.75"><stop offset="0" stop-color="#ffe45c"/><stop offset="0.6" stop-color="#fcc52e"/><stop offset="1" stop-color="#ec9a1e"/></radialGradient></defs><path d="M30.4,456.6Q33.2,456 34.3,452.4Q35.4,456 38.2,456.6Z" fill="#e7e6e8" stroke="#d2d2d4" stroke-width="0.4"/><rect x="30" y="456.2" width="9" height="1.2" fill="#e7e6e8"/><circle cx="34.7" cy="482" r="13.9" fill="url(#eg)"/><path d="M24.6,478.6Q28,476.4 31.6,478.4M37.4,478.4Q41,476.4 44.6,478.6" fill="none" stroke="#8a5a14" stroke-width="1.2" stroke-linecap="round"/><path d="M25.4,481.8H31.4M38.2,481.8H44.2" stroke="#6b4210" stroke-width="1.3" stroke-linecap="round"/><circle cx="30.6" cy="481.2" r="1.1" fill="#4a2c0a"/><circle cx="43.4" cy="481.2" r="1.1" fill="#4a2c0a"/><path d="M29.6,489.8Q36,491.6 40.8,486.2" fill="none" stroke="#6b4210" stroke-width="1.3" stroke-linecap="round"/></svg>
<div class="a " style="left:0.00px;top:639.60px;width:1029.00px;height:6.40px;background:#f4f4f4;"></div>
<span class="t" style="left:465.70px;top:643.05px;font-size:7px;color:#444;transform:scaleX(1.0275);transform-origin:0 0;">Privacy Policy and Terms of Use</span>
<svg width="1035" height="646" viewBox="0 0 1035 646"><path d="M233.6,181.6H330.6V204.6H245.9V215.9H330.6V220.2H233.6Q230.2,220.2 230.2,216.8V185.0Q230.2,181.6 233.6,181.6Z" fill="#b18e35"/><path d="M230.5,216.8V185.0Q230.5,181.9 233.6,181.9H330.4" stroke="#ccb67c" stroke-width="0.55" fill="none"/><text x="234.00" y="189.81" font-size="6.5" fill="#fff" text-anchor="start" textLength="13.60" lengthAdjust="spacingAndGlyphs" stroke="#fff" stroke-width="0.36">when</text><rect x="253.60" y="183.80" width="36.10" height="7.30" rx="2" fill="#e8ddc2"/><text x="256.20" y="189.81" font-size="6.5" fill="#000" text-anchor="start" textLength="23.60" lengthAdjust="spacingAndGlyphs" stroke="#000" stroke-width="0.32">Canvas1</text><path d="M284.30,186.65h3.6l-1.8,2.3Z" fill="#b18e35"/><text x="292.00" y="189.81" font-size="6.5" fill="#fff" text-anchor="start" textLength="26.00" lengthAdjust="spacingAndGlyphs" stroke="#fff" stroke-width="0.36">.Touched</text><rect x="237.5" y="195.1" width="8.40" height="6.9" rx="2.2" fill="#f2d0c0" stroke="#d4622d" stroke-width="0.7"/><text x="241.70" y="200.91" font-size="6.5" fill="#000" text-anchor="middle" stroke="#000" stroke-width="0.32">x</text><rect x="251.4" y="195.1" width="8.40" height="6.9" rx="2.2" fill="#f2d0c0" stroke="#d4622d" stroke-width="0.7"/><text x="255.60" y="200.91" font-size="6.5" fill="#000" text-anchor="middle" stroke="#000" stroke-width="0.32">y</text><rect x="265.3" y="195.1" width="56.20" height="6.9" rx="2.2" fill="#f2d0c0" stroke="#d4622d" stroke-width="0.7"/><text x="293.40" y="200.91" font-size="6.5" fill="#000" text-anchor="middle" stroke="#000" stroke-width="0.32">touchedAnySprite</text><text x="234.00" y="212.11" font-size="6.5" fill="#fff" text-anchor="start" stroke="#fff" stroke-width="0.36">do</text><path d="M248.50,204.60H358.10Q358.90,204.60 358.90,205.40V215.10Q358.90,215.90 358.10,215.90H248.50Q245.90,215.90 245.90,213.30V207.20Q245.90,204.60 248.50,204.60Z" fill="#b18e35"/><path d="M246.2,213.4V207.2Q246.2,204.9 248.6,204.9H330.6" stroke="#ccb67c" stroke-width="0.6" fill="none"/><path d="M248.4,215.9l1.4,1.6h2.8l1.4,-1.6" stroke="#ccb67c" stroke-width="0.5" fill="#b18e35"/><text x="250.60" y="212.11" font-size="6.5" fill="#fff" text-anchor="start" textLength="59.00" lengthAdjust="spacingAndGlyphs" stroke="#fff" stroke-width="0.36">open another screen</text><text x="314.90" y="212.11" font-size="6.5" fill="#fff" text-anchor="start" textLength="36.20" lengthAdjust="spacingAndGlyphs" stroke="#fff" stroke-width="0.36">screenName</text><path d="M360.00,204.30H399.00Q399.80,204.30 399.80,205.10V214.70Q399.80,215.50 399.00,215.50H360.00V215.30v-2.2c0,-4.4 -3.5,2.2 -3.5,-3.3s3.5,1.1 3.5,-3.3Z" fill="#c2354c"/><path d="M360.30,204.60H399.20" stroke="#d77c8b" stroke-width="0.55" fill="none"/><rect x="362.20" y="205.70" width="35.20" height="7.90" rx="2" fill="#edc2c9"/><text x="365.00" y="212.01" font-size="6.5" fill="#000" text-anchor="start" textLength="23.60" lengthAdjust="spacingAndGlyphs" stroke="#000" stroke-width="0.32">Screen3</text><path d="M392.00,208.85h3.6l-1.8,2.3Z" fill="#c2354c"/><path d="M232.20000000000002,271.0H319.8V282.4H245.7V598H319.8V603.6H232.20000000000002Q228.8,603.6 228.8,600.2V274.4Q228.8,271.0 232.20000000000002,271.0Z" fill="#b18e35"/><path d="M229.10000000000002,600.2V274.4Q229.10000000000002,271.3 232.20000000000002,271.3H319.6" stroke="#ccb67c" stroke-width="0.55" fill="none"/><text x="232.80" y="279.01" font-size="6.5" fill="#fff" text-anchor="start" textLength="13.60" lengthAdjust="spacingAndGlyphs" stroke="#fff" stroke-width="0.36">when</text><rect x="252.10" y="273.00" width="35.60" height="7.30" rx="2" fill="#e8ddc2"/><text x="254.70" y="279.01" font-size="6.5" fill="#000" text-anchor="start" textLength="23.40" lengthAdjust="spacingAndGlyphs" stroke="#000" stroke-width="0.32">Screen4</text><path d="M282.30,275.85h3.6l-1.8,2.3Z" fill="#b18e35"/><text x="289.70" y="279.01" font-size="6.5" fill="#fff" text-anchor="start" textLength="25.00" lengthAdjust="spacingAndGlyphs" stroke="#fff" stroke-width="0.36">.Initialize</text><text x="232.80" y="289.91" font-size="6.5" fill="#fff" text-anchor="start" stroke="#fff" stroke-width="0.36">do</text><path d="M248.70000000000002,282.4H345.2V293.7H259.3V513H347.5V518.8H248.70000000000002Q245.9,518.8 245.9,516V285.2Q245.9,282.4 248.70000000000002,282.4Z" fill="#d4622d"/><path d="M246.20000000000002,515.5V285.2Q246.20000000000002,282.7 248.70000000000002,282.7H345" stroke="#e39976" stroke-width="0.55" fill="none"/><rect x="249.40" y="284.40" width="6.9" height="6.9" rx="1.5" fill="#5535c8" stroke="#fff" stroke-opacity="0.6" stroke-width="0.5"/><circle cx="252.85" cy="287.85" r="1.6" fill="none" stroke="#fff" stroke-width="1.35"/><text x="261.20" y="290.01" font-size="6.5" fill="#fff" text-anchor="start" stroke="#fff" stroke-width="0.36">initialize local</text><rect x="302.00" y="284.20" width="29.40" height="7.20" rx="2" fill="#f2d0c0"/><text x="304.80" y="290.16" font-size="6.5" fill="#000" text-anchor="start" textLength="24.00" lengthAdjust="spacingAndGlyphs" stroke="#000" stroke-width="0.32">Feelings</text><text x="333.70" y="290.01" font-size="6.5" fill="#fff" text-anchor="start" stroke="#fff" stroke-width="0.36">to</text><text x="249.00" y="301.41" font-size="6.5" fill="#fff" text-anchor="start" stroke="#fff" stroke-width="0.36">in</text><path d="M346.20,282.40H396.80Q397.60,282.40 397.60,283.20V291.90Q397.60,292.70 396.80,292.70H346.20V293.40v-2.2c0,-4.4 -3.5,2.2 -3.5,-3.3s3.5,1.1 3.5,-3.3Z" fill="#b18e35"/><path d="M346.50,282.70H397.00" stroke="#ccb67c" stroke-width="0.55" fill="none"/><text x="351.60" y="289.81" font-size="6.5" fill="#fff" text-anchor="start" textLength="41.60" lengthAdjust="spacingAndGlyphs" stroke="#fff" stroke-width="0.36">get start value</text><path d="M261.90,293.70H294.60V310.50H281.50V325.90H294.60V332.85H281.50V507.15H294.30V513.00H261.90Q259.30,513.00 259.30,510.40V296.30Q259.30,293.70 261.90,293.70Z" fill="#b18e35"/><path d="M259.60,510.40V296.30Q259.60,294.00 261.90,294.00H294.30" stroke="#ccb67c" stroke-width="0.6" fill="none"/><path d="M263.50,512.80l1.6,1.9h3.2l1.6,-1.9Z" fill="#b18e35"/><rect x="263.60" y="296.30" width="6.9" height="6.9" rx="1.5" fill="#5535c8" stroke="#fff" stroke-opacity="0.6" stroke-width="0.5"/><circle cx="267.05" cy="299.75" r="1.6" fill="none" stroke="#fff" stroke-width="1.35"/><text x="275.40" y="301.61" font-size="6.5" fill="#fff" text-anchor="start" stroke="#fff" stroke-width="0.36">if</text><text x="263.60" y="318.11" font-size="6.5" fill="#fff" text-anchor="start" stroke="#fff" stroke-width="0.36">then</text><text x="263.60" y="340.61" font-size="6.5" fill="#fff" text-anchor="start" textLength="11.70" lengthAdjust="spacingAndGlyphs" stroke="#fff" stroke-width="0.36">else</text><path d="M294.80,293.70H420.50Q421.30,293.70 421.30,294.50V309.30Q421.30,310.10 420.50,310.10H294.80V304.70v-2.2c0,-4.4 -3.5,2.2 -3.5,-3.3s3.5,1.1 3.5,-3.3Z" fill="#3f71b5"/><path d="M295.10,294.00H420.70" stroke="#82a3cf" stroke-width="0.55" fill="none"/><path d="M299.80,295.90H355.00Q355.80,295.90 355.80,296.70V307.30Q355.80,308.10 355.00,308.10H299.80V306.90v-2.2c0,-4.4 -3.5,2.2 -3.5,-3.3s3.5,1.1 3.5,-3.3Z" fill="#d4622d"/><path d="M300.10,296.20H355.20" stroke="#e39976" stroke-width="0.55" fill="none"/><text x="306.00" y="304.41" font-size="6.5" fill="#fff" text-anchor="start" textLength="9.60" lengthAdjust="spacingAndGlyphs" stroke="#fff" stroke-width="0.36">get</text><rect x="317.20" y="298.50" width="36.10" height="7.60" rx="2" fill="#f2d0c0"/><text x="320.00" y="304.66" font-size="6.5" fill="#000" text-anchor="start" textLength="24.00" lengthAdjust="spacingAndGlyphs" stroke="#000" stroke-width="0.32">Feelings</text><path d="M347.90,301.50h3.6l-1.8,2.3Z" fill="#d4622d"/><rect x="357.60" y="298.50" width="15.30" height="7.60" rx="2" fill="#c5d4e9"/><text x="361.20" y="304.66" font-size="6.5" fill="#000" text-anchor="start" stroke="#000" stroke-width="0.32">=</text><path d="M367.50,301.50h3.6l-1.8,2.3Z" fill="#2d5590"/><path d="M377.30,296.20H416.20Q417.00,296.20 417.00,297.00V307.60Q417.00,308.40 416.20,308.40H377.30V307.20v-2.2c0,-4.4 -3.5,2.2 -3.5,-3.3s3.5,1.1 3.5,-3.3Z" fill="#b32d5e"/><path d="M377.60,296.50H416.40" stroke="#ce7696" stroke-width="0.55" fill="none"/><text x="381.00" y="305.11" font-size="6.5" fill="#fff" text-anchor="start" stroke="#fff" stroke-width="0.36">“</text><rect x="386.20" y="298.50" width="21.70" height="7.60" rx="2" fill="#e8c0cf"/><text x="388.80" y="304.66" font-size="6.5" fill="#000" text-anchor="start" textLength="16.50" lengthAdjust="spacingAndGlyphs" stroke="#000" stroke-width="0.32">Great</text><text x="409.50" y="305.11" font-size="6.5" fill="#fff" text-anchor="start" stroke="#fff" stroke-width="0.36">”</text><path d="M284.90,310.50H393.80Q394.60,310.50 394.60,311.30V325.40Q394.60,326.20 393.80,326.20H284.90Q281.50,326.20 281.50,322.80V313.90Q281.50,310.50 284.90,310.50Z" fill="#d4622d"/><path d="M281.80,323.60V313.90Q281.80,310.80 284.90,310.80H394.60" stroke="#e39976" stroke-width="0.55" fill="none"/><path d="M285.70,326.00l1.6,1.9h3.2l1.6,-1.9" fill="#d4622d" stroke="#e39976" stroke-width="0.5"/><text x="285.40" y="318.61" font-size="6.5" fill="#fff" text-anchor="start" stroke="#fff" stroke-width="0.36">set</text><rect x="296.00" y="312.60" width="82.80" height="7.50" rx="2" fill="#f2d0c0"/><text x="298.70" y="318.71" font-size="6.5" fill="#000" text-anchor="start" textLength="71.60" lengthAdjust="spacingAndGlyphs" stroke="#000" stroke-width="0.32">global Number_of_Great</text><path d="M373.40,315.55h3.6l-1.8,2.3Z" fill="#d4622d"/><text x="380.70" y="318.61" font-size="6.5" fill="#fff" text-anchor="start" stroke="#fff" stroke-width="0.36">to</text><path d="M394.60,310.40H548.40Q549.20,310.40 549.20,311.20V325.80Q549.20,326.60 548.40,326.60H394.60V321.40v-2.2c0,-4.4 -3.5,2.2 -3.5,-3.3s3.5,1.1 3.5,-3.3Z" fill="#3f71b5"/><path d="M394.90,310.70H548.60" stroke="#82a3cf" stroke-width="0.55" fill="none"/><rect x="400.00" y="312.90" width="6.9" height="6.9" rx="1.5" fill="#2f5fd6" stroke="#fff" stroke-opacity="0.6" stroke-width="0.5"/><circle cx="403.45" cy="316.35" r="1.6" fill="none" stroke="#fff" stroke-width="1.35"/><path d="M414.10,312.90H514.00Q514.80,312.90 514.80,313.70V324.00Q514.80,324.80 514.00,324.80H414.10V323.90v-2.2c0,-4.4 -3.5,2.2 -3.5,-3.3s3.5,1.1 3.5,-3.3Z" fill="#d4622d"/><path d="M414.40,313.20H514.20" stroke="#e39976" stroke-width="0.55" fill="none"/><text x="419.40" y="321.31" font-size="6.5" fill="#fff" text-anchor="start" textLength="9.60" lengthAdjust="spacingAndGlyphs" stroke="#fff" stroke-width="0.36">get</text><rect x="430.40" y="315.20" width="82.80" height="7.60" rx="2" fill="#f2d0c0"/><text x="433.10" y="321.36" font-size="6.5" fill="#000" text-anchor="start" textLength="71.60" lengthAdjust="spacingAndGlyphs" stroke="#000" stroke-width="0.32">global Number_of_Great</text><path d="M507.80,318.20h3.6l-1.8,2.3Z" fill="#d4622d"/><text x="521.40" y="321.28" font-size="7" fill="#fff" text-anchor="middle" stroke="#fff" stroke-width="0.36">+</text><path d="M532.70,312.90H541.60Q542.40,312.90 542.40,313.70V324.00Q542.40,324.80 541.60,324.80H532.70V323.90v-2.2c0,-4.4 -3.5,2.2 -3.5,-3.3s3.5,1.1 3.5,-3.3Z" fill="#3f71b5"/><path d="M533.00,313.20H541.80" stroke="#82a3cf" stroke-width="0.55" fill="none"/><path d="M532.70,312.90H542.40V324.80H532.70" stroke="#82a3cf" stroke-width="0.5" fill="none"/><rect x="533.30" y="314.80" width="8.50" height="8.00" rx="2" fill="#c5d4e9"/><text x="535.80" y="321.16" font-size="6.5" fill="#000" text-anchor="start" stroke="#000" stroke-width="0.32">1</text><path d="M284.25,332.85H316.95V349.65H303.85V365.05H316.95V372.00H303.85V501.30H316.65V507.15H284.25Q281.65,507.15 281.65,504.55V335.45Q281.65,332.85 284.25,332.85Z" fill="#b18e35"/><path d="M281.95,504.55V335.45Q281.95,333.15 284.25,333.15H316.65" stroke="#ccb67c" stroke-width="0.6" fill="none"/><path d="M285.85,506.95l1.6,1.9h3.2l1.6,-1.9Z" fill="#b18e35"/><rect x="285.95" y="335.45" width="6.9" height="6.9" rx="1.5" fill="#5535c8" stroke="#fff" stroke-opacity="0.6" stroke-width="0.5"/><circle cx="289.40" cy="338.90" r="1.6" fill="none" stroke="#fff" stroke-width="1.35"/><text x="297.75" y="340.76" font-size="6.5" fill="#fff" text-anchor="start" stroke="#fff" stroke-width="0.36">if</text><text x="285.95" y="357.26" font-size="6.5" fill="#fff" text-anchor="start" stroke="#fff" stroke-width="0.36">then</text><text x="285.95" y="379.76" font-size="6.5" fill="#fff" text-anchor="start" textLength="11.70" lengthAdjust="spacingAndGlyphs" stroke="#fff" stroke-width="0.36">else</text><path d="M317.15,332.85H439.15Q439.95,332.85 439.95,333.65V348.45Q439.95,349.25 439.15,349.25H317.15V343.85v-2.2c0,-4.4 -3.5,2.2 -3.5,-3.3s3.5,1.1 3.5,-3.3Z" fill="#3f71b5"/><path d="M317.45,333.15H439.35" stroke="#82a3cf" stroke-width="0.55" fill="none"/><path d="M322.15,335.05H377.35Q378.15,335.05 378.15,335.85V346.45Q378.15,347.25 377.35,347.25H322.15V346.05v-2.2c0,-4.4 -3.5,2.2 -3.5,-3.3s3.5,1.1 3.5,-3.3Z" fill="#d4622d"/><path d="M322.45,335.35H377.55" stroke="#e39976" stroke-width="0.55" fill="none"/><text x="328.35" y="343.56" font-size="6.5" fill="#fff" text-anchor="start" textLength="9.60" lengthAdjust="spacingAndGlyphs" stroke="#fff" stroke-width="0.36">get</text><rect x="339.55" y="337.65" width="36.10" height="7.60" rx="2" fill="#f2d0c0"/><text x="342.35" y="343.81" font-size="6.5" fill="#000" text-anchor="start" textLength="24.00" lengthAdjust="spacingAndGlyphs" stroke="#000" stroke-width="0.32">Feelings</text><path d="M370.25,340.65h3.6l-1.8,2.3Z" fill="#d4622d"/><rect x="379.95" y="337.65" width="15.30" height="7.60" rx="2" fill="#c5d4e9"/><text x="383.55" y="343.81" font-size="6.5" fill="#000" text-anchor="start" stroke="#000" stroke-width="0.32">=</text><path d="M389.85,340.65h3.6l-1.8,2.3Z" fill="#2d5590"/><path d="M399.65,335.35H434.85Q435.65,335.35 435.65,336.15V346.75Q435.65,347.55 434.85,347.55H399.65V346.35v-2.2c0,-4.4 -3.5,2.2 -3.5,-3.3s3.5,1.1 3.5,-3.3Z" fill="#b32d5e"/><path d="M399.95,335.65H435.05" stroke="#ce7696" stroke-width="0.55" fill="none"/><text x="403.35" y="344.26" font-size="6.5" fill="#fff" text-anchor="start" stroke="#fff" stroke-width="0.36">“</text><rect x="408.55" y="337.65" width="18.00" height="7.60" rx="2" fill="#e8c0cf"/><text x="411.15" y="343.81" font-size="6.5" fill="#000" text-anchor="start" textLength="12.80" lengthAdjust="spacingAndGlyphs" stroke="#000" stroke-width="0.32">Nice</text><text x="428.15" y="344.26" font-size="6.5" fill="#fff" text-anchor="start" stroke="#fff" stroke-width="0.36">”</text><path d="M307.25,349.65H412.45Q413.25,349.65 413.25,350.45V364.55Q413.25,365.35 412.45,365.35H307.25Q303.85,365.35 303.85,361.95V353.05Q303.85,349.65 307.25,349.65Z" fill="#d4622d"/><path d="M304.15,362.75V353.05Q304.15,349.95 307.25,349.95H413.25" stroke="#e39976" stroke-width="0.55" fill="none"/><path d="M308.05,365.15l1.6,1.9h3.2l1.6,-1.9" fill="#d4622d" stroke="#e39976" stroke-width="0.5"/><text x="307.75" y="357.76" font-size="6.5" fill="#fff" text-anchor="start" stroke="#fff" stroke-width="0.36">set</text><rect x="318.35" y="351.75" width="79.10" height="7.50" rx="2" fill="#f2d0c0"/><text x="321.05" y="357.86" font-size="6.5" fill="#000" text-anchor="start" stroke="#000" stroke-width="0.32">global Number_of_Nice</text><path d="M392.05,354.70h3.6l-1.8,2.3Z" fill="#d4622d"/><text x="399.35" y="357.76" font-size="6.5" fill="#fff" text-anchor="start" stroke="#fff" stroke-width="0.36">to</text><path d="M413.25,349.55H563.35Q564.15,349.55 564.15,350.35V364.95Q564.15,365.75 563.35,365.75H413.25V360.55v-2.2c0,-4.4 -3.5,2.2 -3.5,-3.3s3.5,1.1 3.5,-3.3Z" fill="#3f71b5"/><path d="M413.55,349.85H563.55" stroke="#82a3cf" stroke-width="0.55" fill="none"/><rect x="418.65" y="352.05" width="6.9" height="6.9" rx="1.5" fill="#2f5fd6" stroke="#fff" stroke-opacity="0.6" stroke-width="0.5"/><circle cx="422.10" cy="355.50" r="1.6" fill="none" stroke="#fff" stroke-width="1.35"/><path d="M432.75,352.05H528.95Q529.75,352.05 529.75,352.85V363.15Q529.75,363.95 528.95,363.95H432.75V363.05v-2.2c0,-4.4 -3.5,2.2 -3.5,-3.3s3.5,1.1 3.5,-3.3Z" fill="#d4622d"/><path d="M433.05,352.35H529.15" stroke="#e39976" stroke-width="0.55" fill="none"/><text x="438.05" y="360.46" font-size="6.5" fill="#fff" text-anchor="start" textLength="9.60" lengthAdjust="spacingAndGlyphs" stroke="#fff" stroke-width="0.36">get</text><rect x="449.05" y="354.35" width="79.10" height="7.60" rx="2" fill="#f2d0c0"/><text x="451.75" y="360.51" font-size="6.5" fill="#000" text-anchor="start" stroke="#000" stroke-width="0.32">global Number_of_Nice</text><path d="M522.75,357.35h3.6l-1.8,2.3Z" fill="#d4622d"/><text x="536.35" y="360.43" font-size="7" fill="#fff" text-anchor="middle" stroke="#fff" stroke-width="0.36">+</text><path d="M547.65,352.05H556.55Q557.35,352.05 557.35,352.85V363.15Q557.35,363.95 556.55,363.95H547.65V363.05v-2.2c0,-4.4 -3.5,2.2 -3.5,-3.3s3.5,1.1 3.5,-3.3Z" fill="#3f71b5"/><path d="M547.95,352.35H556.75" stroke="#82a3cf" stroke-width="0.55" fill="none"/><path d="M547.65,352.05H557.35V363.95H547.65" stroke="#82a3cf" stroke-width="0.5" fill="none"/><rect x="548.25" y="353.95" width="8.50" height="8.00" rx="2" fill="#c5d4e9"/><text x="550.75" y="360.31" font-size="6.5" fill="#000" text-anchor="start" stroke="#000" stroke-width="0.32">1</text><path d="M306.60,372.00H339.30V388.80H326.20V404.20H339.30V411.15H326.20V495.45H339.00V501.30H306.60Q304.00,501.30 304.00,498.70V374.60Q304.00,372.00 306.60,372.00Z" fill="#b18e35"/><path d="M304.30,498.70V374.60Q304.30,372.30 306.60,372.30H339.00" stroke="#ccb67c" stroke-width="0.6" fill="none"/><path d="M308.20,501.10l1.6,1.9h3.2l1.6,-1.9Z" fill="#b18e35"/><rect x="308.30" y="374.60" width="6.9" height="6.9" rx="1.5" fill="#5535c8" stroke="#fff" stroke-opacity="0.6" stroke-width="0.5"/><circle cx="311.75" cy="378.05" r="1.6" fill="none" stroke="#fff" stroke-width="1.35"/><text x="320.10" y="379.91" font-size="6.5" fill="#fff" text-anchor="start" stroke="#fff" stroke-width="0.36">if</text><text x="308.30" y="396.41" font-size="6.5" fill="#fff" text-anchor="start" stroke="#fff" stroke-width="0.36">then</text><text x="308.30" y="418.91" font-size="6.5" fill="#fff" text-anchor="start" textLength="11.70" lengthAdjust="spacingAndGlyphs" stroke="#fff" stroke-width="0.36">else</text><path d="M339.50,372.00H469.50Q470.30,372.00 470.30,372.80V387.60Q470.30,388.40 469.50,388.40H339.50V383.00v-2.2c0,-4.4 -3.5,2.2 -3.5,-3.3s3.5,1.1 3.5,-3.3Z" fill="#3f71b5"/><path d="M339.80,372.30H469.70" stroke="#82a3cf" stroke-width="0.55" fill="none"/><path d="M344.50,374.20H399.70Q400.50,374.20 400.50,375.00V385.60Q400.50,386.40 399.70,386.40H344.50V385.20v-2.2c0,-4.4 -3.5,2.2 -3.5,-3.3s3.5,1.1 3.5,-3.3Z" fill="#d4622d"/><path d="M344.80,374.50H399.90" stroke="#e39976" stroke-width="0.55" fill="none"/><text x="350.70" y="382.71" font-size="6.5" fill="#fff" text-anchor="start" textLength="9.60" lengthAdjust="spacingAndGlyphs" stroke="#fff" stroke-width="0.36">get</text><rect x="361.90" y="376.80" width="36.10" height="7.60" rx="2" fill="#f2d0c0"/><text x="364.70" y="382.96" font-size="6.5" fill="#000" text-anchor="start" textLength="24.00" lengthAdjust="spacingAndGlyphs" stroke="#000" stroke-width="0.32">Feelings</text><path d="M392.60,379.80h3.6l-1.8,2.3Z" fill="#d4622d"/><rect x="402.30" y="376.80" width="15.30" height="7.60" rx="2" fill="#c5d4e9"/><text x="405.90" y="382.96" font-size="6.5" fill="#000" text-anchor="start" stroke="#000" stroke-width="0.32">=</text><path d="M412.20,379.80h3.6l-1.8,2.3Z" fill="#2d5590"/><path d="M422.00,374.50H465.20Q466.00,374.50 466.00,375.30V385.90Q466.00,386.70 465.20,386.70H422.00V385.50v-2.2c0,-4.4 -3.5,2.2 -3.5,-3.3s3.5,1.1 3.5,-3.3Z" fill="#b32d5e"/><path d="M422.30,374.80H465.40" stroke="#ce7696" stroke-width="0.55" fill="none"/><text x="425.70" y="383.41" font-size="6.5" fill="#fff" text-anchor="start" stroke="#fff" stroke-width="0.36">“</text><rect x="430.90" y="376.80" width="26.00" height="7.60" rx="2" fill="#e8c0cf"/><text x="433.50" y="382.96" font-size="6.5" fill="#000" text-anchor="start" stroke="#000" stroke-width="0.32">Neutral</text><text x="458.50" y="383.41" font-size="6.5" fill="#fff" text-anchor="start" stroke="#fff" stroke-width="0.36">”</text><path d="M329.60,388.80H442.80Q443.60,388.80 443.60,389.60V403.70Q443.60,404.50 442.80,404.50H329.60Q326.20,404.50 326.20,401.10V392.20Q326.20,388.80 329.60,388.80Z" fill="#d4622d"/><path d="M326.50,401.90V392.20Q326.50,389.10 329.60,389.10H443.60" stroke="#e39976" stroke-width="0.55" fill="none"/><path d="M330.40,404.30l1.6,1.9h3.2l1.6,-1.9" fill="#d4622d" stroke="#e39976" stroke-width="0.5"/><text x="330.10" y="396.91" font-size="6.5" fill="#fff" text-anchor="start" stroke="#fff" stroke-width="0.36">set</text><rect x="340.70" y="390.90" width="87.10" height="7.50" rx="2" fill="#f2d0c0"/><text x="343.40" y="397.01" font-size="6.5" fill="#000" text-anchor="start" textLength="76.10" lengthAdjust="spacingAndGlyphs" stroke="#000" stroke-width="0.32">global Number_of_Neutral</text><path d="M422.40,393.85h3.6l-1.8,2.3Z" fill="#d4622d"/><text x="429.70" y="396.91" font-size="6.5" fill="#fff" text-anchor="start" stroke="#fff" stroke-width="0.36">to</text><path d="M443.60,388.70H601.70Q602.50,388.70 602.50,389.50V404.10Q602.50,404.90 601.70,404.90H443.60V399.70v-2.2c0,-4.4 -3.5,2.2 -3.5,-3.3s3.5,1.1 3.5,-3.3Z" fill="#3f71b5"/><path d="M443.90,389.00H601.90" stroke="#82a3cf" stroke-width="0.55" fill="none"/><rect x="449.00" y="391.20" width="6.9" height="6.9" rx="1.5" fill="#2f5fd6" stroke="#fff" stroke-opacity="0.6" stroke-width="0.5"/><circle cx="452.45" cy="394.65" r="1.6" fill="none" stroke="#fff" stroke-width="1.35"/><path d="M463.10,391.20H567.30Q568.10,391.20 568.10,392.00V402.30Q568.10,403.10 567.30,403.10H463.10V402.20v-2.2c0,-4.4 -3.5,2.2 -3.5,-3.3s3.5,1.1 3.5,-3.3Z" fill="#d4622d"/><path d="M463.40,391.50H567.50" stroke="#e39976" stroke-width="0.55" fill="none"/><text x="468.40" y="399.61" font-size="6.5" fill="#fff" text-anchor="start" textLength="9.60" lengthAdjust="spacingAndGlyphs" stroke="#fff" stroke-width="0.36">get</text><rect x="479.40" y="393.50" width="87.10" height="7.60" rx="2" fill="#f2d0c0"/><text x="482.10" y="399.66" font-size="6.5" fill="#000" text-anchor="start" textLength="76.10" lengthAdjust="spacingAndGlyphs" stroke="#000" stroke-width="0.32">global Number_of_Neutral</text><path d="M561.10,396.50h3.6l-1.8,2.3Z" fill="#d4622d"/><text x="574.70" y="399.58" font-size="7" fill="#fff" text-anchor="middle" stroke="#fff" stroke-width="0.36">+</text><path d="M586.00,391.20H594.90Q595.70,391.20 595.70,392.00V402.30Q595.70,403.10 594.90,403.10H586.00V402.20v-2.2c0,-4.4 -3.5,2.2 -3.5,-3.3s3.5,1.1 3.5,-3.3Z" fill="#3f71b5"/><path d="M586.30,391.50H595.10" stroke="#82a3cf" stroke-width="0.55" fill="none"/><path d="M586.00,391.20H595.70V403.10H586.00" stroke="#82a3cf" stroke-width="0.5" fill="none"/><rect x="586.60" y="393.10" width="8.50" height="8.00" rx="2" fill="#c5d4e9"/><text x="589.10" y="399.46" font-size="6.5" fill="#000" text-anchor="start" stroke="#000" stroke-width="0.32">1</text><path d="M328.95,411.15H361.65V427.95H348.55V443.35H361.65V450.30H348.55V489.60H361.35V495.45H328.95Q326.35,495.45 326.35,492.85V413.75Q326.35,411.15 328.95,411.15Z" fill="#b18e35"/><path d="M326.65,492.85V413.75Q326.65,411.45 328.95,411.45H361.35" stroke="#ccb67c" stroke-width="0.6" fill="none"/><path d="M330.55,495.25l1.6,1.9h3.2l1.6,-1.9Z" fill="#b18e35"/><rect x="330.65" y="413.75" width="6.9" height="6.9" rx="1.5" fill="#5535c8" stroke="#fff" stroke-opacity="0.6" stroke-width="0.5"/><circle cx="334.10" cy="417.20" r="1.6" fill="none" stroke="#fff" stroke-width="1.35"/><text x="342.45" y="419.06" font-size="6.5" fill="#fff" text-anchor="start" stroke="#fff" stroke-width="0.36">if</text><text x="330.65" y="435.56" font-size="6.5" fill="#fff" text-anchor="start" stroke="#fff" stroke-width="0.36">then</text><text x="330.65" y="458.06" font-size="6.5" fill="#fff" text-anchor="start" textLength="11.70" lengthAdjust="spacingAndGlyphs" stroke="#fff" stroke-width="0.36">else</text><path d="M361.85,411.15H487.55Q488.35,411.15 488.35,411.95V426.75Q488.35,427.55 487.55,427.55H361.85V422.15v-2.2c0,-4.4 -3.5,2.2 -3.5,-3.3s3.5,1.1 3.5,-3.3Z" fill="#3f71b5"/><path d="M362.15,411.45H487.75" stroke="#82a3cf" stroke-width="0.55" fill="none"/><path d="M366.85,413.35H422.05Q422.85,413.35 422.85,414.15V424.75Q422.85,425.55 422.05,425.55H366.85V424.35v-2.2c0,-4.4 -3.5,2.2 -3.5,-3.3s3.5,1.1 3.5,-3.3Z" fill="#d4622d"/><path d="M367.15,413.65H422.25" stroke="#e39976" stroke-width="0.55" fill="none"/><text x="373.05" y="421.86" font-size="6.5" fill="#fff" text-anchor="start" textLength="9.60" lengthAdjust="spacingAndGlyphs" stroke="#fff" stroke-width="0.36">get</text><rect x="384.25" y="415.95" width="36.10" height="7.60" rx="2" fill="#f2d0c0"/><text x="387.05" y="422.11" font-size="6.5" fill="#000" text-anchor="start" textLength="24.00" lengthAdjust="spacingAndGlyphs" stroke="#000" stroke-width="0.32">Feelings</text><path d="M414.95,418.95h3.6l-1.8,2.3Z" fill="#d4622d"/><rect x="424.65" y="415.95" width="15.30" height="7.60" rx="2" fill="#c5d4e9"/><text x="428.25" y="422.11" font-size="6.5" fill="#000" text-anchor="start" stroke="#000" stroke-width="0.32">=</text><path d="M434.55,418.95h3.6l-1.8,2.3Z" fill="#2d5590"/><path d="M444.35,413.65H483.25Q484.05,413.65 484.05,414.45V425.05Q484.05,425.85 483.25,425.85H444.35V424.65v-2.2c0,-4.4 -3.5,2.2 -3.5,-3.3s3.5,1.1 3.5,-3.3Z" fill="#b32d5e"/><path d="M444.65,413.95H483.45" stroke="#ce7696" stroke-width="0.55" fill="none"/><text x="448.05" y="422.56" font-size="6.5" fill="#fff" text-anchor="start" stroke="#fff" stroke-width="0.36">“</text><rect x="453.25" y="415.95" width="21.70" height="7.60" rx="2" fill="#e8c0cf"/><text x="455.85" y="422.11" font-size="6.5" fill="#000" text-anchor="start" textLength="16.50" lengthAdjust="spacingAndGlyphs" stroke="#000" stroke-width="0.32">Upset</text><text x="476.55" y="422.56" font-size="6.5" fill="#fff" text-anchor="start" stroke="#fff" stroke-width="0.36">”</text><path d="M351.95,427.95H460.85Q461.65,427.95 461.65,428.75V442.85Q461.65,443.65 460.85,443.65H351.95Q348.55,443.65 348.55,440.25V431.35Q348.55,427.95 351.95,427.95Z" fill="#d4622d"/><path d="M348.85,441.05V431.35Q348.85,428.25 351.95,428.25H461.65" stroke="#e39976" stroke-width="0.55" fill="none"/><path d="M352.75,443.45l1.6,1.9h3.2l1.6,-1.9" fill="#d4622d" stroke="#e39976" stroke-width="0.5"/><text x="352.45" y="436.06" font-size="6.5" fill="#fff" text-anchor="start" stroke="#fff" stroke-width="0.36">set</text><rect x="363.05" y="430.05" width="82.80" height="7.50" rx="2" fill="#f2d0c0"/><text x="365.75" y="436.16" font-size="6.5" fill="#000" text-anchor="start" stroke="#000" stroke-width="0.32">global Number_of_Upset</text><path d="M440.45,433.00h3.6l-1.8,2.3Z" fill="#d4622d"/><text x="447.75" y="436.06" font-size="6.5" fill="#fff" text-anchor="start" stroke="#fff" stroke-width="0.36">to</text><path d="M461.65,427.85H615.45Q616.25,427.85 616.25,428.65V443.25Q616.25,444.05 615.45,444.05H461.65V438.85v-2.2c0,-4.4 -3.5,2.2 -3.5,-3.3s3.5,1.1 3.5,-3.3Z" fill="#3f71b5"/><path d="M461.95,428.15H615.65" stroke="#82a3cf" stroke-width="0.55" fill="none"/><rect x="467.05" y="430.35" width="6.9" height="6.9" rx="1.5" fill="#2f5fd6" stroke="#fff" stroke-opacity="0.6" stroke-width="0.5"/><circle cx="470.50" cy="433.80" r="1.6" fill="none" stroke="#fff" stroke-width="1.35"/><path d="M481.15,430.35H581.05Q581.85,430.35 581.85,431.15V441.45Q581.85,442.25 581.05,442.25H481.15V441.35v-2.2c0,-4.4 -3.5,2.2 -3.5,-3.3s3.5,1.1 3.5,-3.3Z" fill="#d4622d"/><path d="M481.45,430.65H581.25" stroke="#e39976" stroke-width="0.55" fill="none"/><text x="486.45" y="438.76" font-size="6.5" fill="#fff" text-anchor="start" textLength="9.60" lengthAdjust="spacingAndGlyphs" stroke="#fff" stroke-width="0.36">get</text><rect x="497.45" y="432.65" width="82.80" height="7.60" rx="2" fill="#f2d0c0"/><text x="500.15" y="438.81" font-size="6.5" fill="#000" text-anchor="start" stroke="#000" stroke-width="0.32">global Number_of_Upset</text><path d="M574.85,435.65h3.6l-1.8,2.3Z" fill="#d4622d"/><text x="588.45" y="438.73" font-size="7" fill="#fff" text-anchor="middle" stroke="#fff" stroke-width="0.36">+</text><path d="M599.75,430.35H608.65Q609.45,430.35 609.45,431.15V441.45Q609.45,442.25 608.65,442.25H599.75V441.35v-2.2c0,-4.4 -3.5,2.2 -3.5,-3.3s3.5,1.1 3.5,-3.3Z" fill="#3f71b5"/><path d="M600.05,430.65H608.85" stroke="#82a3cf" stroke-width="0.55" fill="none"/><path d="M599.75,430.35H609.45V442.25H599.75" stroke="#82a3cf" stroke-width="0.5" fill="none"/><rect x="600.35" y="432.25" width="8.50" height="8.00" rx="2" fill="#c5d4e9"/><text x="602.85" y="438.61" font-size="6.5" fill="#000" text-anchor="start" stroke="#000" stroke-width="0.32">1</text><path d="M351.30,450.30H384.00V467.10H370.90V482.50V483.75H383.70V489.60H351.30Q348.70,489.60 348.70,487.00V452.90Q348.70,450.30 351.30,450.30Z" fill="#b18e35"/><path d="M349.00,487.00V452.90Q349.00,450.60 351.30,450.60H383.70" stroke="#ccb67c" stroke-width="0.6" fill="none"/><path d="M352.90,489.40l1.6,1.9h3.2l1.6,-1.9Z" fill="#b18e35"/><rect x="353.00" y="452.90" width="6.9" height="6.9" rx="1.5" fill="#5535c8" stroke="#fff" stroke-opacity="0.6" stroke-width="0.5"/><circle cx="356.45" cy="456.35" r="1.6" fill="none" stroke="#fff" stroke-width="1.35"/><text x="364.80" y="458.21" font-size="6.5" fill="#fff" text-anchor="start" stroke="#fff" stroke-width="0.36">if</text><text x="353.00" y="474.71" font-size="6.5" fill="#fff" text-anchor="start" stroke="#fff" stroke-width="0.36">then</text><path d="M384.20,450.30H504.10Q504.90,450.30 504.90,451.10V465.90Q504.90,466.70 504.10,466.70H384.20V461.30v-2.2c0,-4.4 -3.5,2.2 -3.5,-3.3s3.5,1.1 3.5,-3.3Z" fill="#3f71b5"/><path d="M384.50,450.60H504.30" stroke="#82a3cf" stroke-width="0.55" fill="none"/><path d="M389.20,452.50H444.40Q445.20,452.50 445.20,453.30V463.90Q445.20,464.70 444.40,464.70H389.20V463.50v-2.2c0,-4.4 -3.5,2.2 -3.5,-3.3s3.5,1.1 3.5,-3.3Z" fill="#d4622d"/><path d="M389.50,452.80H444.60" stroke="#e39976" stroke-width="0.55" fill="none"/><text x="395.40" y="461.01" font-size="6.5" fill="#fff" text-anchor="start" textLength="9.60" lengthAdjust="spacingAndGlyphs" stroke="#fff" stroke-width="0.36">get</text><rect x="406.60" y="455.10" width="36.10" height="7.60" rx="2" fill="#f2d0c0"/><text x="409.40" y="461.26" font-size="6.5" fill="#000" text-anchor="start" textLength="24.00" lengthAdjust="spacingAndGlyphs" stroke="#000" stroke-width="0.32">Feelings</text><path d="M437.30,458.10h3.6l-1.8,2.3Z" fill="#d4622d"/><rect x="447.00" y="455.10" width="15.30" height="7.60" rx="2" fill="#c5d4e9"/><text x="450.60" y="461.26" font-size="6.5" fill="#000" text-anchor="start" stroke="#000" stroke-width="0.32">=</text><path d="M456.90,458.10h3.6l-1.8,2.3Z" fill="#2d5590"/><path d="M466.70,452.80H499.80Q500.60,452.80 500.60,453.60V464.20Q500.60,465.00 499.80,465.00H466.70V463.80v-2.2c0,-4.4 -3.5,2.2 -3.5,-3.3s3.5,1.1 3.5,-3.3Z" fill="#b32d5e"/><path d="M467.00,453.10H500.00" stroke="#ce7696" stroke-width="0.55" fill="none"/><text x="470.40" y="461.71" font-size="6.5" fill="#fff" text-anchor="start" stroke="#fff" stroke-width="0.36">“</text><rect x="475.60" y="455.10" width="15.90" height="7.60" rx="2" fill="#e8c0cf"/><text x="478.20" y="461.26" font-size="6.5" fill="#000" text-anchor="start" textLength="10.70" lengthAdjust="spacingAndGlyphs" stroke="#000" stroke-width="0.32">Sad</text><text x="493.10" y="461.71" font-size="6.5" fill="#fff" text-anchor="start" stroke="#fff" stroke-width="0.36">”</text><path d="M374.30,467.10H477.90Q478.70,467.10 478.70,467.90V482.00Q478.70,482.80 477.90,482.80H374.30Q370.90,482.80 370.90,479.40V470.50Q370.90,467.10 374.30,467.10Z" fill="#d4622d"/><path d="M371.20,480.20V470.50Q371.20,467.40 374.30,467.40H478.70" stroke="#e39976" stroke-width="0.55" fill="none"/><path d="M375.10,482.60l1.6,1.9h3.2l1.6,-1.9" fill="#d4622d" stroke="#e39976" stroke-width="0.5"/><text x="374.80" y="475.21" font-size="6.5" fill="#fff" text-anchor="start" stroke="#fff" stroke-width="0.36">set</text><rect x="385.40" y="469.20" width="77.50" height="7.50" rx="2" fill="#f2d0c0"/><text x="388.10" y="475.31" font-size="6.5" fill="#000" text-anchor="start" stroke="#000" stroke-width="0.32">global Number_of_Sad</text><path d="M457.50,472.15h3.6l-1.8,2.3Z" fill="#d4622d"/><text x="464.80" y="475.21" font-size="6.5" fill="#fff" text-anchor="start" stroke="#fff" stroke-width="0.36">to</text><path d="M478.70,467.00H627.20Q628.00,467.00 628.00,467.80V482.40Q628.00,483.20 627.20,483.20H478.70V478.00v-2.2c0,-4.4 -3.5,2.2 -3.5,-3.3s3.5,1.1 3.5,-3.3Z" fill="#3f71b5"/><path d="M479.00,467.30H627.40" stroke="#82a3cf" stroke-width="0.55" fill="none"/><rect x="484.10" y="469.50" width="6.9" height="6.9" rx="1.5" fill="#2f5fd6" stroke="#fff" stroke-opacity="0.6" stroke-width="0.5"/><circle cx="487.55" cy="472.95" r="1.6" fill="none" stroke="#fff" stroke-width="1.35"/><path d="M498.20,469.50H592.80Q593.60,469.50 593.60,470.30V480.60Q593.60,481.40 592.80,481.40H498.20V480.50v-2.2c0,-4.4 -3.5,2.2 -3.5,-3.3s3.5,1.1 3.5,-3.3Z" fill="#d4622d"/><path d="M498.50,469.80H593.00" stroke="#e39976" stroke-width="0.55" fill="none"/><text x="503.50" y="477.91" font-size="6.5" fill="#fff" text-anchor="start" textLength="9.60" lengthAdjust="spacingAndGlyphs" stroke="#fff" stroke-width="0.36">get</text><rect x="514.50" y="471.80" width="77.50" height="7.60" rx="2" fill="#f2d0c0"/><text x="517.20" y="477.96" font-size="6.5" fill="#000" text-anchor="start" stroke="#000" stroke-width="0.32">global Number_of_Sad</text><path d="M586.60,474.80h3.6l-1.8,2.3Z" fill="#d4622d"/><text x="600.20" y="477.88" font-size="7" fill="#fff" text-anchor="middle" stroke="#fff" stroke-width="0.36">+</text><path d="M611.50,469.50H620.40Q621.20,469.50 621.20,470.30V480.60Q621.20,481.40 620.40,481.40H611.50V480.50v-2.2c0,-4.4 -3.5,2.2 -3.5,-3.3s3.5,1.1 3.5,-3.3Z" fill="#3f71b5"/><path d="M611.80,469.80H620.60" stroke="#82a3cf" stroke-width="0.55" fill="none"/><path d="M611.50,469.50H621.20V481.40H611.50" stroke="#82a3cf" stroke-width="0.5" fill="none"/><rect x="612.10" y="471.40" width="8.50" height="8.00" rx="2" fill="#c5d4e9"/><text x="614.60" y="477.76" font-size="6.5" fill="#000" text-anchor="start" stroke="#000" stroke-width="0.32">1</text><path d="M250.10,518.60l1.6,1.9h3.2l1.6,-1.9Z" fill="#d4622d"/><path d="M248.30,518.80H373.50Q374.30,518.80 374.30,519.60V597.40Q374.30,598.20 373.50,598.20H248.30Q245.50,598.20 245.50,595.40V521.60Q245.50,518.80 248.30,518.80Z" fill="#7c5385"/><path d="M245.8,595.4000000000001V521.5999999999999Q245.8,519.0999999999999 248.3,519.0999999999999H374.3" stroke="#aa8fb0" stroke-width="0.55" fill="none"/><path d="M249.70,598.00l1.6,1.9h3.2l1.6,-1.9" fill="#7c5385" stroke="#aa8fb0" stroke-width="0.5"/><text x="249.90" y="526.11" font-size="6.5" fill="#fff" text-anchor="start" textLength="9.40" lengthAdjust="spacingAndGlyphs" stroke="#fff" stroke-width="0.36">call</text><rect x="262.50" y="520.40" width="61.50" height="7.40" rx="2" fill="#d8cbda"/><text x="265.20" y="526.46" font-size="6.5" fill="#000" text-anchor="start" textLength="51.00" lengthAdjust="spacingAndGlyphs" stroke="#000" stroke-width="0.32">ChartMakerPlus1</text><path d="M318.60,523.30h3.6l-1.8,2.3Z" fill="#7c5385"/><text x="326.00" y="526.11" font-size="6.5" fill="#fff" text-anchor="start" textLength="40.30" lengthAdjust="spacingAndGlyphs" stroke="#fff" stroke-width="0.36">.ColumnChart</text><text x="365.80" y="537.41" font-size="6.5" fill="#fff" text-anchor="end" stroke="#fff" stroke-width="0.36">webViewer</text><text x="365.80" y="548.71" font-size="6.5" fill="#fff" text-anchor="end" stroke="#fff" stroke-width="0.36">arrayTable</text><text x="365.80" y="560.31" font-size="6.5" fill="#fff" text-anchor="end" stroke="#fff" stroke-width="0.36">title</text><text x="365.80" y="571.91" font-size="6.5" fill="#fff" text-anchor="end" stroke="#fff" stroke-width="0.36">zoom</text><text x="365.80" y="583.81" font-size="6.5" fill="#fff" text-anchor="end" stroke="#fff" stroke-width="0.36">extraOptions</text><text x="365.80" y="594.61" font-size="6.5" fill="#fff" text-anchor="end" stroke="#fff" stroke-width="0.36">css</text><path d="M374.30,529.90H425.90Q426.70,529.90 426.70,530.70V540.00Q426.70,540.80 425.90,540.80H374.30V540.90v-2.2c0,-4.4 -3.5,2.2 -3.5,-3.3s3.5,1.1 3.5,-3.3Z" fill="#439970"/><path d="M374.60,530.20H426.10" stroke="#85bda2" stroke-width="0.55" fill="none"/><rect x="376.30" y="531.60" width="47.70" height="7.50" rx="2" fill="#c7e0d4"/><text x="379.00" y="537.71" font-size="6.5" fill="#000" text-anchor="start" stroke="#000" stroke-width="0.32">WebViewer1</text><path d="M418.60,534.55h3.6l-1.8,2.3Z" fill="#439970"/><path d="M374.30,541.30H463.30Q464.10,541.30 464.10,542.10V551.80Q464.10,552.60 463.30,552.60H374.30V552.30v-2.2c0,-4.4 -3.5,2.2 -3.5,-3.3s3.5,1.1 3.5,-3.3Z" fill="#d4622d"/><path d="M374.60,541.60H463.50" stroke="#e39976" stroke-width="0.55" fill="none"/><text x="378.90" y="549.21" font-size="6.5" fill="#fff" text-anchor="start" textLength="9.60" lengthAdjust="spacingAndGlyphs" stroke="#fff" stroke-width="0.36">get</text><rect x="390.10" y="543.20" width="70.80" height="7.50" rx="2" fill="#f2d0c0"/><text x="392.80" y="549.31" font-size="6.5" fill="#000" text-anchor="start" textLength="60.60" lengthAdjust="spacingAndGlyphs" stroke="#000" stroke-width="0.32">global BarGraphData</text><path d="M455.50,546.15h3.6l-1.8,2.3Z" fill="#d4622d"/><path d="M374.30,552.90H397.60Q398.40,552.90 398.40,553.70V563.00Q398.40,563.80 397.60,563.80H374.30V563.90v-2.2c0,-4.4 -3.5,2.2 -3.5,-3.3s3.5,1.1 3.5,-3.3Z" fill="#b32d5e"/><path d="M374.60,553.20H397.80" stroke="#ce7696" stroke-width="0.55" fill="none"/><text x="378.00" y="561.01" font-size="6.5" fill="#fff" text-anchor="start" stroke="#fff" stroke-width="0.36">“</text><rect x="382.80" y="554.70" width="7.60" height="7.40" rx="2" fill="#e8c0cf"/><text x="392.00" y="561.01" font-size="6.5" fill="#fff" text-anchor="start" stroke="#fff" stroke-width="0.36">”</text><path d="M374.30,564.20H402.90Q403.70,564.20 403.70,565.00V574.70Q403.70,575.50 402.90,575.50H374.30V575.20v-2.2c0,-4.4 -3.5,2.2 -3.5,-3.3s3.5,1.1 3.5,-3.3Z" fill="#77ab41"/><path d="M374.60,564.50H403.10" stroke="#a7c884" stroke-width="0.55" fill="none"/><rect x="376.30" y="566.00" width="24.10" height="7.60" rx="2" fill="#d6e6c6"/><text x="379.00" y="572.16" font-size="6.5" fill="#000" text-anchor="start" stroke="#000" stroke-width="0.32">false</text><path d="M395.00,569.00h3.6l-1.8,2.3Z" fill="#77ab41"/><path d="M374.30,578.40c0,4.4 -3.5,-3.5 -3.5,3.3s3.5,-1.1 3.5,3.3Z" fill="#fff"/><path d="M374.30,589.40c0,4.4 -3.5,-3.5 -3.5,3.3s3.5,-1.1 3.5,3.3Z" fill="#fff"/><path d="M652.60,320.50H769.50Q770.30,320.50 770.30,321.30V331.00Q770.30,331.80 769.50,331.80H652.60Q648.00,331.80 648.00,327.20V325.10Q648.00,320.50 652.60,320.50Z" fill="#d4622d"/><path d="M648.3,327.2V325.1Q648.3,320.8 652.6,320.8H770.3" stroke="#e39976" stroke-width="0.55" fill="none"/><text x="652.40" y="328.46" font-size="6.5" fill="#fff" text-anchor="start" textLength="41.80" lengthAdjust="spacingAndGlyphs" stroke="#fff" stroke-width="0.36">initialize global</text><rect x="696.60" y="322.60" width="57.80" height="7.40" rx="2" fill="#f2d0c0"/><text x="699.90" y="328.66" font-size="6.5" fill="#000" text-anchor="start" textLength="51.20" lengthAdjust="spacingAndGlyphs" stroke="#000" stroke-width="0.32">Number_of_Great</text><text x="756.40" y="328.46" font-size="6.5" fill="#fff" text-anchor="start" stroke="#fff" stroke-width="0.36">to</text><path d="M770.30,320.50H781.90Q782.70,320.50 782.70,321.30V331.00Q782.70,331.80 781.90,331.80H770.30V331.50v-2.2c0,-4.4 -3.5,2.2 -3.5,-3.3s3.5,1.1 3.5,-3.3Z" fill="#3f71b5"/><path d="M770.60,320.80H782.10" stroke="#82a3cf" stroke-width="0.55" fill="none"/><rect x="772.10" y="322.50" width="8.40" height="7.40" rx="2" fill="#c5d4e9"/><text x="774.50" y="328.56" font-size="6.5" fill="#000" text-anchor="start" stroke="#000" stroke-width="0.32">0</text><path d="M656.60,337.50H770.80Q771.60,337.50 771.60,338.30V347.90Q771.60,348.70 770.80,348.70H656.60Q652.00,348.70 652.00,344.10V342.10Q652.00,337.50 656.60,337.50Z" fill="#d4622d"/><path d="M652.3,344.09999999999997V342.1Q652.3,337.8 656.6,337.8H771.6" stroke="#e39976" stroke-width="0.55" fill="none"/><text x="656.30" y="345.41" font-size="6.5" fill="#fff" text-anchor="start" textLength="41.80" lengthAdjust="spacingAndGlyphs" stroke="#fff" stroke-width="0.36">initialize global</text><rect x="700.30" y="339.60" width="55.40" height="7.30" rx="2" fill="#f2d0c0"/><text x="703.60" y="345.61" font-size="6.5" fill="#000" text-anchor="start" stroke="#000" stroke-width="0.32">Number_of_Nice</text><text x="757.30" y="345.41" font-size="6.5" fill="#fff" text-anchor="start" stroke="#fff" stroke-width="0.36">to</text><path d="M771.60,337.50H783.20Q784.00,337.50 784.00,338.30V347.90Q784.00,348.70 783.20,348.70H771.60V348.50v-2.2c0,-4.4 -3.5,2.2 -3.5,-3.3s3.5,1.1 3.5,-3.3Z" fill="#3f71b5"/><path d="M771.90,337.80H783.40" stroke="#82a3cf" stroke-width="0.55" fill="none"/><rect x="773.40" y="339.50" width="8.40" height="7.30" rx="2" fill="#c5d4e9"/><text x="775.80" y="345.51" font-size="6.5" fill="#000" text-anchor="start" stroke="#000" stroke-width="0.32">0</text><path d="M656.60,355.70H778.60Q779.40,355.70 779.40,356.50V365.80Q779.40,366.60 778.60,366.60H656.60Q652.00,366.60 652.00,362.00V360.30Q652.00,355.70 656.60,355.70Z" fill="#d4622d"/><path d="M652.3,362.0V360.3Q652.3,356.0 656.6,356.0H779.4" stroke="#e39976" stroke-width="0.55" fill="none"/><text x="656.30" y="363.46" font-size="6.5" fill="#fff" text-anchor="start" textLength="41.80" lengthAdjust="spacingAndGlyphs" stroke="#fff" stroke-width="0.36">initialize global</text><rect x="700.30" y="357.80" width="62.90" height="7.00" rx="2" fill="#f2d0c0"/><text x="703.60" y="363.66" font-size="6.5" fill="#000" text-anchor="start" textLength="56.30" lengthAdjust="spacingAndGlyphs" stroke="#000" stroke-width="0.32">Number_of_Neutral</text><text x="765.00" y="363.46" font-size="6.5" fill="#fff" text-anchor="start" stroke="#fff" stroke-width="0.36">to</text><path d="M779.40,355.70H790.90Q791.70,355.70 791.70,356.50V365.80Q791.70,366.60 790.90,366.60H779.40V366.70v-2.2c0,-4.4 -3.5,2.2 -3.5,-3.3s3.5,1.1 3.5,-3.3Z" fill="#3f71b5"/><path d="M779.70,356.00H791.10" stroke="#82a3cf" stroke-width="0.55" fill="none"/><rect x="781.20" y="357.70" width="8.30" height="7.00" rx="2" fill="#c5d4e9"/><text x="783.60" y="363.56" font-size="6.5" fill="#000" text-anchor="start" stroke="#000" stroke-width="0.32">0</text><path d="M656.60,374.20H773.80Q774.60,374.20 774.60,375.00V384.30Q774.60,385.10 773.80,385.10H656.60Q652.00,385.10 652.00,380.50V378.80Q652.00,374.20 656.60,374.20Z" fill="#d4622d"/><path d="M652.3,380.5V378.8Q652.3,374.5 656.6,374.5H774.6" stroke="#e39976" stroke-width="0.55" fill="none"/><text x="656.30" y="381.96" font-size="6.5" fill="#fff" text-anchor="start" textLength="41.80" lengthAdjust="spacingAndGlyphs" stroke="#fff" stroke-width="0.36">initialize global</text><rect x="700.30" y="376.30" width="58.50" height="7.00" rx="2" fill="#f2d0c0"/><text x="703.60" y="382.16" font-size="6.5" fill="#000" text-anchor="start" textLength="51.90" lengthAdjust="spacingAndGlyphs" stroke="#000" stroke-width="0.32">Number_of_Upset</text><text x="760.40" y="381.96" font-size="6.5" fill="#fff" text-anchor="start" stroke="#fff" stroke-width="0.36">to</text><path d="M774.60,374.20H786.20Q787.00,374.20 787.00,375.00V384.30Q787.00,385.10 786.20,385.10H774.60V385.20v-2.2c0,-4.4 -3.5,2.2 -3.5,-3.3s3.5,1.1 3.5,-3.3Z" fill="#3f71b5"/><path d="M774.90,374.50H786.40" stroke="#82a3cf" stroke-width="0.55" fill="none"/><rect x="776.40" y="376.20" width="8.40" height="7.00" rx="2" fill="#c5d4e9"/><text x="778.80" y="382.06" font-size="6.5" fill="#000" text-anchor="start" stroke="#000" stroke-width="0.32">0</text><path d="M658.80,392.20H771.40Q772.20,392.20 772.20,393.00V402.50Q772.20,403.30 771.40,403.30H658.80Q654.20,403.30 654.20,398.70V396.80Q654.20,392.20 658.80,392.20Z" fill="#d4622d"/><path d="M654.5,398.7V396.8Q654.5,392.5 658.8000000000001,392.5H772.2" stroke="#e39976" stroke-width="0.55" fill="none"/><text x="658.60" y="400.06" font-size="6.5" fill="#fff" text-anchor="start" textLength="41.80" lengthAdjust="spacingAndGlyphs" stroke="#fff" stroke-width="0.36">initialize global</text><rect x="702.80" y="394.30" width="52.90" height="7.20" rx="2" fill="#f2d0c0"/><text x="706.10" y="400.26" font-size="6.5" fill="#000" text-anchor="start" textLength="46.30" lengthAdjust="spacingAndGlyphs" stroke="#000" stroke-width="0.32">Number_of_Sad</text><text x="757.60" y="400.06" font-size="6.5" fill="#fff" text-anchor="start" stroke="#fff" stroke-width="0.36">to</text><path d="M772.20,392.20H783.90Q784.70,392.20 784.70,393.00V402.50Q784.70,403.30 783.90,403.30H772.20V403.20v-2.2c0,-4.4 -3.5,2.2 -3.5,-3.3s3.5,1.1 3.5,-3.3Z" fill="#3f71b5"/><path d="M772.50,392.50H784.10" stroke="#82a3cf" stroke-width="0.55" fill="none"/><rect x="774.00" y="394.20" width="8.50" height="7.20" rx="2" fill="#c5d4e9"/><text x="776.40" y="400.16" font-size="6.5" fill="#000" text-anchor="start" stroke="#000" stroke-width="0.32">0</text><rect x="1018" y="209.4" width="4.3" height="193.4" rx="2.1" fill="#cbcbcb"/><rect x="347" y="623.2" width="541" height="4.6" rx="2.3" fill="#c6c6c6"/><g transform="translate(966,140)" stroke="#0c322f" stroke-width="1.5" stroke-linejoin="round" stroke-linecap="round"><path d="M42.6,11.5Q46.2,14 46.8,20L47.3,34.5L44,36.8L43.2,24Z" fill="#2f9f8f"/><path d="M18,5.6Q23,-2.4 28.2,5.6" fill="none" stroke-width="2.2"/><path d="M0.9,11.6L3.4,8.6L3,7.2L5.4,6.4L14.2,7.6V25.2H6.8Z" fill="#d9622b"/><path d="M15.1,5.2H18.6L19.4,3.7H23.4L24.2,5.2H27.7V25.2H15.1Z" fill="#3f9fdc"/><path d="M29.2,25.2L31.4,7.6L36,8.4L36.4,10L39,9L44.4,10.2L38.4,25.6Z" fill="#8e4fa0"/><path d="M4.6,25.3Q1.2,27.2 1.2,31.6Q1.4,37 7,40.4Q11,42.6 16,42.9H36Q42.4,42.8 42.9,38.4L43.7,25Q42,24.3 39,24.5H7Q5.4,24.5 4.6,25.3Z" fill="#3fbfae"/><path d="M39,24.8L37.6,42.4" fill="none" stroke-width="1.1"/><path d="M1.8,29.4Q8,41.2 22,37.2Q31,33.8 36.6,26.4" fill="none" stroke-width="2.9"/><path d="M1.8,29.4Q8,41.2 22,37.2Q31,33.8 36.6,26.4" fill="none" stroke="#52cdbb" stroke-width="1.1"/><path d="M27,37.4L33,31.8V37.4Z" fill="#35a898" stroke-width="0.9"/></g><g stroke="#111" fill="none"><circle cx="998.2" cy="517.3" r="6.2" stroke-width="1.3"/><path d="M998.2,509.3v3M998.2,522.3v3M990.2,517.3h3M1003.2,517.3h3" stroke-width="1.3"/></g><circle cx="998.2" cy="517.3" r="2.3" fill="#111"/><g stroke="#111" fill="none" stroke-width="1.1"><circle cx="998" cy="539.9" r="7.9"/><path d="M993.6,539.9h8.8M998,535.5v8.8" stroke-width="1.3"/><circle cx="998" cy="558.4" r="7.9"/><path d="M993.6,558.4h8.8" stroke-width="1.3"/></g><g fill="#1c1c1c"><rect x="988.8" y="580.9" width="10" height="2.6" rx="1"/><rect x="981.8" y="582.4" width="23.6" height="3.2" rx="0.8"/><path d="M983.4,587.6H1003.8V608.6Q1003.8,610.8 1001.6,610.8H985.6Q983.4,610.8 983.4,608.6Z"/></g><path d="M149.6,578.4L155.2,572.8L160.8,578.4Z" fill="#fff" stroke="#444" stroke-width="0.8" stroke-linejoin="miter"/><path d="M149.6,593.5L155.2,598.8L160.8,593.5Z" fill="#fff" stroke="#444" stroke-width="0.8" stroke-linejoin="miter"/><path d="M185.7,578.4L191.3,572.8L196.9,578.4Z" fill="#fff" stroke="#444" stroke-width="0.8" stroke-linejoin="miter"/><path d="M185.7,593.5L191.3,598.8L196.9,593.5Z" fill="#fff" stroke="#444" stroke-width="0.8" stroke-linejoin="miter"/><path d="M154,582.2L158.4,589.4H149.6Z" fill="#f7f3a0" stroke="#c9c45a" stroke-width="0.7" stroke-linejoin="round"/><path d="M154,584.6v2.6M154,588.1v0.5" stroke="#8a8630" stroke-width="0.7"/><text x="161.80" y="589.06" font-size="4.3" fill="#333" text-anchor="start" stroke="#333" stroke-width="0.32">1</text><circle cx="189.2" cy="586" r="4.6" fill="#e25560" stroke="#c83a48" stroke-width="0.5"/><path d="M187.2,584L191.2,588M191.2,584L187.2,588" stroke="#fff" stroke-width="1.3" stroke-linecap="round"/><text x="196.60" y="589.06" font-size="4.3" fill="#333" text-anchor="start" stroke="#333" stroke-width="0.32">5</text><rect x="141.3" y="600.5" width="65" height="10.6" fill="#f1f1f1" stroke="#555" stroke-width="0.8"/><text x="148.70" y="608.58" font-size="7" fill="#111" text-anchor="start" textLength="50.20" lengthAdjust="spacingAndGlyphs" font-weight="bold" stroke="#111" stroke-width="0.05">Show Warnings</text></svg>
</div></body></html>
